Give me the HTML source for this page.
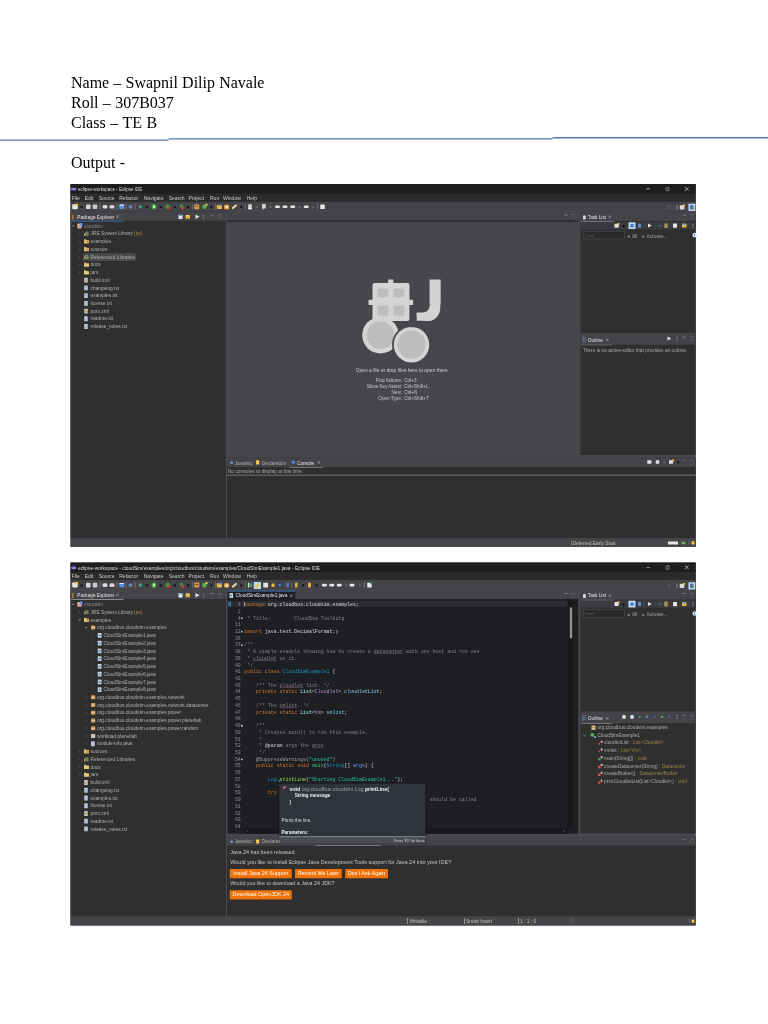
<!DOCTYPE html>
<html><head><meta charset="utf-8"><title>Output</title><style>
html,body{margin:0;padding:0;background:#fff}
body{width:768px;height:1024px;position:relative;overflow:hidden}
#root{position:absolute;left:0;top:0;width:3072px;height:4096px;transform:scale(0.25);transform-origin:0 0}
.b{position:absolute}
.t{position:absolute;white-space:pre;margin:0}
.s{font-family:"Liberation Sans",sans-serif}
.sb{font-family:"Liberation Sans",sans-serif;font-weight:bold}
.h{font-family:"Liberation Serif",serif;font-size:64px;line-height:76px;color:#000}
.m{font-family:"Liberation Mono",monospace;font-size:19.6px;line-height:24px}
#wrap{position:absolute;left:0;top:0;width:768px;height:1024px;overflow:hidden}
.t{opacity:0.999}
</style></head><body><div id="wrap"><div id="root">
<div class="t h" style="left:284px;top:291.6px;word-spacing:0.6px">Name – Swapnil Dilip Navale</div>
<div class="t h" style="left:284px;top:370.8px;word-spacing:1.2px">Roll – 307B037</div>
<div class="t h" style="left:284px;top:451.6px;word-spacing:2.2px">Class – TE B</div>
<div class="t h" style="left:284px;top:614px;word-spacing:1.2px">Output -</div>
<div class="b" style="left:0px;top:557.6px;width:673.6px;height:5.2px;background:#5379b4;"></div>
<div class="b" style="left:673.6px;top:553px;width:1536px;height:5.2px;background:#5379b4;"></div>
<div class="b" style="left:2209.6px;top:548.4px;width:862.4px;height:5.2px;background:#5379b4;"></div>
<div class="b" style="left:281.6px;top:736.4px;width:2501.6px;height:1451.6px;background:#48484c;"></div>
<div class="b" style="left:281.6px;top:804.4px;width:2501.6px;height:42.4px;background:#444448;"></div>
<div class="b" style="left:281.6px;top:845.2px;width:2501.6px;height:2px;background:#4c4c51;"></div>
<div class="b" style="left:281.6px;top:768.4px;width:2501.6px;height:38.4px;background:#2b2b2b;"></div>
<div class="b" style="left:281.6px;top:736.4px;width:2501.6px;height:37.6px;background:#1e1e1e;"></div>
<div class="b" style="left:285.2px;top:749.2px;width:19.6px;height:16px;background:#483c98;border-radius:8px;"></div>
<div class="b" style="left:285.2px;top:754.4px;width:19.6px;height:2px;background:#cfcaea;"></div>
<div class="b" style="left:285.2px;top:758.4px;width:19.6px;height:2px;background:#cfcaea;"></div>
<div class="t s" style="top:748.4px;font-size:18px;line-height:21.6px;color:#dcdcdc;left:312px;">eclipse-workspace - Eclipse IDE</div>
<div class="b" style="left:2586.4px;top:754.4px;width:13.6px;height:2.2px;background:#d8d8d8;"></div>
<div class="b" style="left:2663.2px;top:749.6px;width:9.6px;height:10.4px;background:transparent;border:2.2px solid #d8d8d8;border-radius:2.4px;"></div>
<div class="b" style="left:2666.4px;top:747.2px;width:9.6px;height:5.6px;background:transparent;border-top:2.2px solid #d8d8d8;border-right:2.2px solid #d8d8d8;border-radius:2.4px;"></div>
<div class="b" style="left:2736.4px;top:754.8px;width:22.4px;height:2px;background:#d4d4d4;transform:rotate(45deg)"></div>
<div class="b" style="left:2736.4px;top:754.8px;width:22.4px;height:2px;background:#d4d4d4;transform:rotate(-45deg)"></div>
<div class="t s" style="top:779.2px;font-size:20px;line-height:24px;color:#c8c8c8;left:287px;">File</div>
<div class="t s" style="top:779.2px;font-size:20px;line-height:24px;color:#c8c8c8;left:339px;">Edit</div>
<div class="t s" style="top:779.2px;font-size:20px;line-height:24px;color:#c8c8c8;left:395px;">Source</div>
<div class="t s" style="top:779.2px;font-size:20px;line-height:24px;color:#c8c8c8;left:477px;">Refactor</div>
<div class="t s" style="top:779.2px;font-size:20px;line-height:24px;color:#c8c8c8;left:575px;">Navigate</div>
<div class="t s" style="top:779.2px;font-size:20px;line-height:24px;color:#c8c8c8;left:675px;">Search</div>
<div class="t s" style="top:779.2px;font-size:20px;line-height:24px;color:#c8c8c8;left:754px;">Project</div>
<div class="t s" style="top:779.2px;font-size:20px;line-height:24px;color:#c8c8c8;left:840px;">Run</div>
<div class="t s" style="top:779.2px;font-size:20px;line-height:24px;color:#c8c8c8;left:892px;">Window</div>
<div class="t s" style="top:779.2px;font-size:20px;line-height:24px;color:#c8c8c8;left:987px;">Help</div>
<div class="b" style="left:288.6px;top:816.8px;width:22px;height:20px;background:#e8e8e8;border-radius:3.2px;"></div>
<div class="b" style="left:302px;top:814.8px;width:9.6px;height:8.8px;background:#f2c744;"></div>
<div class="b" style="left:321.6px;top:823.6px;width:9.6px;height:8.4px;background:#111;border-radius:4.4px"></div>
<div class="b" style="left:344px;top:817.6px;width:17.6px;height:18.4px;background:#d6d6d6;border-radius:3.2px;"></div>
<div class="b" style="left:370.8px;top:817.6px;width:18.4px;height:18.4px;background:#cacaca;border-radius:3.2px;"></div>
<div class="b" style="left:398.4px;top:814.8px;width:3.2px;height:24px;background:#707075;"></div>
<div class="b" style="left:410px;top:819.6px;width:20px;height:14.4px;background:#d8d8d8;border-radius:6px;"></div>
<div class="b" style="left:438px;top:819.6px;width:20px;height:14.4px;background:#d8d8d8;border-radius:6px;"></div>
<div class="b" style="left:466.4px;top:814.8px;width:3.2px;height:24px;background:#707075;"></div>
<div class="b" style="left:477px;top:818px;width:20px;height:17.6px;background:#5b8fd9;border-radius:3.2px;"></div>
<div class="b" style="left:478.4px;top:818px;width:17.6px;height:4.8px;background:#dfe8f5;"></div>
<div class="b" style="left:502.4px;top:814.8px;width:3.2px;height:24px;background:#707075;"></div>
<div class="b" style="left:515.2px;top:820px;width:13.6px;height:13.6px;background:#5d86a8;border-radius:3.2px;"></div>
<div class="b" style="left:538.4px;top:814.8px;width:3.2px;height:24px;background:#707075;"></div>
<div class="b" style="left:554.8px;top:819.6px;width:14.4px;height:14.4px;background:#3f9a86;border-radius:7.2px;"></div>
<div class="b" style="left:582.6px;top:823.6px;width:9.6px;height:8.4px;background:#111;border-radius:4.4px"></div>
<div class="b" style="left:605.6px;top:816.4px;width:20.8px;height:20.8px;background:#3fae3f;border-radius:10.4px;"></div>
<div class="b" style="left:612.8px;top:821.6px;width:6.4px;height:10.4px;background:#e9ffe9;"></div>
<div class="b" style="left:638.4px;top:823.6px;width:9.6px;height:8.4px;background:#111;border-radius:4.4px"></div>
<div class="b" style="left:661.2px;top:817.6px;width:18.4px;height:18.4px;background:#3a9a3a;border-radius:9.2px;"></div>
<div class="b" style="left:672px;top:828.4px;width:10.4px;height:8.8px;background:#c33;"></div>
<div class="b" style="left:694.4px;top:823.6px;width:9.6px;height:8.4px;background:#111;border-radius:4.4px"></div>
<div class="b" style="left:718.8px;top:817.2px;width:14.4px;height:14.4px;background:#3a9a3a;border-radius:7.2px;"></div>
<div class="b" style="left:724.8px;top:827.6px;width:12.8px;height:10.4px;background:#d33;border-radius:4px;"></div>
<div class="b" style="left:748.4px;top:823.6px;width:9.6px;height:8.4px;background:#111;border-radius:4.4px"></div>
<div class="b" style="left:768.8px;top:814.8px;width:3.2px;height:24px;background:#707075;"></div>
<div class="b" style="left:777px;top:816.8px;width:20px;height:20px;background:#d89a4a;border-radius:3.2px;"></div>
<div class="b" style="left:780px;top:822.8px;width:13.6px;height:3.2px;background:#7a4a18;"></div>
<div class="b" style="left:808.8px;top:817.6px;width:18.4px;height:18.4px;background:#5ab04a;border-radius:9.2px;"></div>
<div class="b" style="left:821.6px;top:814.8px;width:8px;height:8px;background:#f2c744;"></div>
<div class="b" style="left:839.6px;top:823.6px;width:9.6px;height:8.4px;background:#111;border-radius:4.4px"></div>
<div class="b" style="left:860.8px;top:814.8px;width:3.2px;height:24px;background:#707075;"></div>
<div class="b" style="left:866.8px;top:819.6px;width:21.6px;height:16.8px;background:#e8b84a;border-radius:3.2px;"></div>
<div class="b" style="left:878.4px;top:815.6px;width:9.6px;height:8.8px;background:#4d7fd0;border-radius:4px;"></div>
<div class="b" style="left:897.2px;top:819.2px;width:19.2px;height:17.6px;background:#e8b04a;border-radius:3.2px;"></div>
<div class="b" style="left:901.6px;top:824.4px;width:9.6px;height:8px;background:#fbe9c0;"></div>
<div class="b" style="left:926.4px;top:823.2px;width:23.2px;height:7.6px;background:#f0dca0;transform:rotate(-40deg);border-radius:2.4px"></div>
<div class="b" style="left:959.6px;top:823.6px;width:9.6px;height:8.4px;background:#111;border-radius:4.4px"></div>
<div class="b" style="left:980px;top:814.8px;width:3.2px;height:24px;background:#707075;"></div>
<div class="b" style="left:992.8px;top:816.8px;width:14.4px;height:20px;background:#d8d8d8;border-radius:2px;"></div>
<div class="b" style="left:992.8px;top:833.2px;width:14.4px;height:3.6px;background:#fff;"></div>
<div class="b" style="left:1022.4px;top:823.6px;width:9.6px;height:8.4px;background:#666;border-radius:4.4px"></div>
<div class="b" style="left:1049.2px;top:816.4px;width:13.6px;height:17.6px;background:#cfcfcf;border-radius:2px;"></div>
<div class="b" style="left:1049.6px;top:816.4px;width:3.2px;height:22.4px;background:#eee;"></div>
<div class="b" style="left:1077.2px;top:823.6px;width:9.6px;height:8.4px;background:#666;border-radius:4.4px"></div>
<div class="b" style="left:1100px;top:821.6px;width:20px;height:10.4px;background:#e6e6e6;border-radius:4.8px;"></div>
<div class="b" style="left:1130px;top:821.6px;width:20px;height:10.4px;background:#e6e6e6;border-radius:4.8px;"></div>
<div class="b" style="left:1160.8px;top:821.6px;width:20px;height:10.4px;background:#e6e6e6;border-radius:4.8px;"></div>
<div class="b" style="left:1194px;top:823.6px;width:9.6px;height:8.4px;background:#666;border-radius:4.4px"></div>
<div class="b" style="left:1215px;top:821.6px;width:20px;height:10.4px;background:#e6e6e6;border-radius:4.8px;"></div>
<div class="b" style="left:1247.6px;top:823.6px;width:9.6px;height:8.4px;background:#666;border-radius:4.4px"></div>
<div class="b" style="left:1269.2px;top:814.8px;width:3.2px;height:24px;background:#707075;"></div>
<div class="b" style="left:1280.8px;top:817.6px;width:18.4px;height:18.4px;background:#e9e9e9;border-radius:2px;"></div>
<div class="b" style="left:2669.6px;top:821.6px;width:10.4px;height:10.4px;background:transparent;border:2px solid #777;border-radius:8px;"></div>
<div class="b" style="left:2706.4px;top:819.6px;width:3.2px;height:20px;background:#888;"></div>
<div class="b" style="left:2719.2px;top:821.2px;width:17.6px;height:16.8px;background:#dcdcdc;border-radius:3.2px;"></div>
<div class="b" style="left:2732px;top:818.4px;width:8px;height:8px;background:#e9c440;"></div>
<div class="b" style="left:2753.6px;top:815.2px;width:27.2px;height:28.8px;background:#c6def5;border-radius:2.4px;"></div>
<div class="b" style="left:2760px;top:820px;width:14.4px;height:19.2px;background:#4a6fb8;border-radius:3.2px;"></div>
<div class="b" style="left:2770.4px;top:828px;width:7.2px;height:10.4px;background:#7ab04a;"></div>
<div class="b" style="left:281.6px;top:846px;width:623.2px;height:1306.8px;background:#2f2f2f;"></div>
<div class="b" style="left:281.6px;top:846px;width:623.2px;height:36.8px;background:#444448;"></div>
<div class="b" style="left:281.6px;top:882.8px;width:212.4px;height:3.2px;background:#3f78c4;"></div>
<div class="b" style="left:493.6px;top:850px;width:1.6px;height:32.8px;background:#4c4c50;"></div>
<div class="b" style="left:289.2px;top:858px;width:4.4px;height:20px;background:#c8862e;border-radius:1.6px;"></div>
<div class="t s" style="top:857.12px;font-size:18.8px;line-height:22.56px;color:#e4e4e4;left:309px;">Package Explorer</div>
<div class="b" style="left:462.16px;top:865.6px;width:15.68px;height:1.8px;background:#a0a0a0;transform:rotate(45deg)"></div>
<div class="b" style="left:462.16px;top:865.6px;width:15.68px;height:1.8px;background:#a0a0a0;transform:rotate(-45deg)"></div>
<div class="b" style="left:714.4px;top:858.8px;width:16px;height:17.6px;background:#dfe6ee;border-radius:2px;"></div>
<div class="b" style="left:716.8px;top:859.6px;width:10.4px;height:4.8px;background:#5b8fd9;"></div>
<div class="b" style="left:742px;top:860px;width:17.6px;height:15.2px;background:#e2b13c;border-radius:2.4px;"></div>
<div class="b" style="left:744px;top:860px;width:10.4px;height:4px;background:#f5dc92;"></div>
<div class="b" style="left:782px;top:858.4px;width:0;height:0;border-top:9.2px solid transparent;border-bottom:9.2px solid transparent;border-left:16px solid #e6e6e6;"></div>
<div class="b" style="left:813.2px;top:859.6px;width:3.2px;height:3.2px;background:#d0d0d0;border-radius:1.6px;"></div>
<div class="b" style="left:813.2px;top:866px;width:3.2px;height:3.2px;background:#d0d0d0;border-radius:1.6px;"></div>
<div class="b" style="left:813.2px;top:872.4px;width:3.2px;height:3.2px;background:#d0d0d0;border-radius:1.6px;"></div>
<div class="b" style="left:842.4px;top:859.6px;width:11.2px;height:2.4px;background:#8e8e8e;"></div>
<div class="b" style="left:872px;top:858.8px;width:12px;height:13.6px;background:transparent;border:1.6px solid #767676;border-top-width:2.8px;"></div>
<div class="b" style="left:281.6px;top:846px;width:3.2px;height:1306.8px;background:#505054;"></div>
<div class="b" style="left:905.6px;top:850.8px;width:2.8px;height:1302px;background:#55555a;"></div>
<div class="b" style="left:908.4px;top:846.8px;width:1405.6px;height:37.6px;background:#444448;"></div>
<div class="b" style="left:908.4px;top:881.2px;width:1405.6px;height:7.6px;background:#2c2c30;"></div>
<div class="b" style="left:2322.4px;top:846.8px;width:460.8px;height:485.6px;background:#2f2f2f;"></div>
<div class="b" style="left:2322.4px;top:846.8px;width:460.8px;height:37.6px;background:#444448;"></div>
<div class="b" style="left:2455.2px;top:850.8px;width:1.6px;height:33.6px;background:#4c4c50;"></div>
<div class="b" style="left:2322.4px;top:887.6px;width:460.8px;height:30px;background:#3b3b3f;"></div>
<div class="b" style="left:2323.6px;top:885.2px;width:132px;height:2.4px;background:#8a8a8a;"></div>
<div class="b" style="left:2331.6px;top:862px;width:11.2px;height:16px;background:#d8d8d8;border-radius:1.6px;"></div>
<div class="t s" style="top:857.52px;font-size:18.8px;line-height:22.56px;color:#e0e0e0;left:2351.2px;">Task List</div>
<div class="b" style="left:2430.56px;top:867.2px;width:15.68px;height:1.8px;background:#a0a0a0;transform:rotate(45deg)"></div>
<div class="b" style="left:2430.56px;top:867.2px;width:15.68px;height:1.8px;background:#a0a0a0;transform:rotate(-45deg)"></div>
<div class="b" style="left:2732px;top:858.8px;width:11.2px;height:2.8px;background:#8e8e8e;"></div>
<div class="b" style="left:2761.6px;top:858px;width:12px;height:14.4px;background:transparent;border:1.6px solid #767676;border-top-width:2.8px;"></div>
<div class="b" style="left:2258.4px;top:858.8px;width:11.2px;height:2.8px;background:#8e8e8e;"></div>
<div class="b" style="left:2286.4px;top:858px;width:12px;height:14.4px;background:transparent;border:1.6px solid #767676;border-top-width:2.8px;"></div>
<div class="b" style="left:2458px;top:894.8px;width:16.8px;height:16px;background:#e4e4e4;border-radius:3.2px;"></div>
<div class="b" style="left:2469.6px;top:891.6px;width:8px;height:8px;background:#e9c440;"></div>
<div class="b" style="left:2489.2px;top:899.6px;width:9.6px;height:8.4px;background:#111;border-radius:4.4px"></div>
<div class="b" style="left:2514.4px;top:889.2px;width:28px;height:27.2px;background:#bcd9f2;border-radius:2px;"></div>
<div class="b" style="left:2521.2px;top:896px;width:13.6px;height:13.6px;background:#4d7fd0;border-radius:3.2px;"></div>
<div class="b" style="left:2552.4px;top:894.8px;width:12px;height:16px;background:#5b8fd9;border-radius:2px;"></div>
<div class="b" style="left:2574.4px;top:892.8px;width:3.2px;height:20px;background:#4a4a4e;"></div>
<div class="b" style="left:2592px;top:894.4px;width:0;height:0;border-top:8.4px solid transparent;border-bottom:8.4px solid transparent;border-left:15.2px solid #e0e0e0;"></div>
<div class="b" style="left:2631.2px;top:900.4px;width:14.4px;height:4.8px;background:#44679a;border-radius:1.6px;"></div>
<div class="b" style="left:2658px;top:893.6px;width:12px;height:18.4px;background:#e0b040;border-radius:1.6px;"></div>
<div class="b" style="left:2662.8px;top:893.6px;width:2.8px;height:18.4px;background:#3a67b5;"></div>
<div class="b" style="left:2692px;top:894.4px;width:16px;height:16.8px;background:#e6e6e6;border-radius:2.4px;"></div>
<div class="b" style="left:2728px;top:895.2px;width:17.6px;height:15.2px;background:#e9b540;border-radius:2.4px;"></div>
<div class="b" style="left:2732px;top:894.8px;width:9.6px;height:6.4px;background:#6f9ad8;"></div>
<div class="b" style="left:2770.4px;top:894.8px;width:3.2px;height:3.2px;background:#d0d0d0;border-radius:1.6px;"></div>
<div class="b" style="left:2770.4px;top:901.2px;width:3.2px;height:3.2px;background:#d0d0d0;border-radius:1.6px;"></div>
<div class="b" style="left:2770.4px;top:907.6px;width:3.2px;height:3.2px;background:#d0d0d0;border-radius:1.6px;"></div>
<div class="b" style="left:2333.2px;top:924px;width:164.4px;height:33.2px;background:#2a2a2a;border:2px solid #55585c;box-sizing:border-box;"></div>
<div class="t s" style="top:931.84px;font-size:17.6px;line-height:21.12px;color:#5a5d62;left:2340.8px;">Find</div>
<div class="b" style="left:2510px;top:942.4px;width:9.6px;height:8.4px;background:#888;border-radius:4.4px"></div>
<div class="t s" style="top:933.28px;font-size:19.2px;line-height:23.04px;color:#a0a0a0;left:2528px;">All</div>
<div class="b" style="left:2567.6px;top:942.4px;width:9.6px;height:8.4px;background:#888;border-radius:4.4px"></div>
<div class="t s" style="top:933.28px;font-size:19.2px;line-height:23.04px;color:#a0a0a0;left:2586px;">Activate...</div>
<div class="b" style="left:2770px;top:931.2px;width:18.4px;height:18.4px;background:#dbe7f7;border-radius:9.2px;"></div>
<div class="b" style="left:2776.8px;top:934.8px;width:3.6px;height:10.4px;background:#3f6fc0;"></div>
<div class="b" style="left:2322.4px;top:1332.4px;width:460.8px;height:488px;background:#2f2f2f;"></div>
<div class="b" style="left:2322.4px;top:1332.4px;width:460.8px;height:46.4px;background:#444448;"></div>
<div class="b" style="left:2448.8px;top:1336.4px;width:1.6px;height:42.4px;background:#4c4c50;"></div>
<div class="b" style="left:2323.6px;top:1378.8px;width:125.6px;height:2.4px;background:#8a8a8a;"></div>
<div class="b" style="left:2330.4px;top:1346.8px;width:4.8px;height:4.8px;background:#4d8fe0;"></div>
<div class="b" style="left:2330.4px;top:1354.8px;width:4.8px;height:4.8px;background:#4d8fe0;"></div>
<div class="b" style="left:2330.4px;top:1362.8px;width:4.8px;height:4.8px;background:#4d8fe0;"></div>
<div class="b" style="left:2336.8px;top:1348.4px;width:6.4px;height:2px;background:#bbb;"></div>
<div class="b" style="left:2336.8px;top:1356.4px;width:6.4px;height:2px;background:#bbb;"></div>
<div class="b" style="left:2336.8px;top:1364.4px;width:6.4px;height:2px;background:#bbb;"></div>
<div class="t s" style="top:1349.28px;font-size:19.2px;line-height:23.04px;color:#e0e0e0;left:2351.2px;">Outline</div>
<div class="b" style="left:2420.56px;top:1359.2px;width:15.68px;height:1.8px;background:#a0a0a0;transform:rotate(45deg)"></div>
<div class="b" style="left:2420.56px;top:1359.2px;width:15.68px;height:1.8px;background:#a0a0a0;transform:rotate(-45deg)"></div>
<div class="b" style="left:2732px;top:1346.8px;width:11.2px;height:2.8px;background:#8e8e8e;"></div>
<div class="b" style="left:2761.6px;top:1346px;width:12px;height:14.4px;background:transparent;border:1.6px solid #767676;border-top-width:2.8px;"></div>
<div class="b" style="left:2706.4px;top:1346px;width:3.2px;height:3.2px;background:#d0d0d0;border-radius:1.6px;"></div>
<div class="b" style="left:2706.4px;top:1352.4px;width:3.2px;height:3.2px;background:#d0d0d0;border-radius:1.6px;"></div>
<div class="b" style="left:2706.4px;top:1358.8px;width:3.2px;height:3.2px;background:#d0d0d0;border-radius:1.6px;"></div>
<div class="b" style="left:2670.4px;top:1345.6px;width:0;height:0;border-top:8.4px solid transparent;border-bottom:8.4px solid transparent;border-left:15.2px solid #e0e0e0;"></div>
<div class="b" style="left:908px;top:1830px;width:1875.2px;height:322.8px;background:#2f2f2f;"></div>
<div class="b" style="left:908px;top:1830px;width:1875.2px;height:38.4px;background:#444448;"></div>
<div class="b" style="left:281.6px;top:2152.8px;width:2501.6px;height:35.2px;background:#46464a;"></div>
<div class="b" style="left:2766.4px;top:2164.4px;width:11.2px;height:14.4px;background:#f2c440;border-radius:5.6px;"></div>
<div class="b" style="left:2755.2px;top:2165.2px;width:2.4px;height:3.2px;background:#9a9a9a;"></div>
<div class="b" style="left:2755.2px;top:2172.4px;width:2.4px;height:3.2px;background:#9a9a9a;"></div>
<div class="b" style="left:908.4px;top:888.8px;width:1405.6px;height:939.2px;background:#47474b;"></div>
<div class="b" style="left:287.2px;top:901.6px;width:0;height:0;border-left:5.2px solid transparent;border-right:5.2px solid transparent;border-top:6.4px solid #9a9a9a;"></div>
<div class="b" style="left:308.8px;top:896px;width:18.4px;height:17.6px;background:#d8a0a6;border-radius:3.2px;"></div>
<div class="b" style="left:317.6px;top:892.4px;width:12px;height:11.2px;background:#6a98dc;border-radius:2.8px;"></div>
<div class="b" style="left:310.4px;top:894.4px;width:7.2px;height:5.6px;background:#e8c07a;border-radius:2px;"></div>
<div class="t s" style="left:336.4px;top:892.4px;font-size:19.2px;line-height:23.2px;color:#8c8c8c">cloudsim</div>
<div class="b" style="left:317.2px;top:931.32px;width:0;height:0;border-top:4.4px solid transparent;border-bottom:4.4px solid transparent;border-left:5.6px solid #5c5c5c;"></div>
<div class="b" style="left:336px;top:932.52px;width:4.4px;height:11.2px;background:#cf9a38;"></div>
<div class="b" style="left:340.8px;top:927.72px;width:4.4px;height:16px;background:#4f9ac4;"></div>
<div class="b" style="left:345.6px;top:926.12px;width:4.4px;height:17.6px;background:#cf9a38;"></div>
<div class="b" style="left:350.4px;top:930.12px;width:4px;height:13.6px;background:#74a64c;"></div>
<div class="t s" style="left:362.4px;top:923.32px;font-size:19.2px;line-height:23.2px;color:#b0b0b0">JRE System Library <span style="color:#a08a50">[jre]</span></div>
<div class="b" style="left:317.2px;top:962.24px;width:0;height:0;border-top:4.4px solid transparent;border-bottom:4.4px solid transparent;border-left:5.6px solid #5c5c5c;"></div>
<div class="b" style="left:336px;top:959.84px;width:19.6px;height:14.4px;background:#e6c070;border-radius:2.4px;"></div>
<div class="b" style="left:336px;top:957.04px;width:8.8px;height:4.8px;background:#e6c070;border-radius:2px;"></div>
<div class="b" style="left:346.4px;top:963.44px;width:7.2px;height:7.2px;background:#b98a4a;border-radius:1.6px;"></div>
<div class="t s" style="left:362.4px;top:954.24px;font-size:19.2px;line-height:23.2px;color:#b0b0b0">examples</div>
<div class="b" style="left:317.2px;top:993.16px;width:0;height:0;border-top:4.4px solid transparent;border-bottom:4.4px solid transparent;border-left:5.6px solid #5c5c5c;"></div>
<div class="b" style="left:336px;top:990.76px;width:19.6px;height:14.4px;background:#e6c070;border-radius:2.4px;"></div>
<div class="b" style="left:336px;top:987.96px;width:8.8px;height:4.8px;background:#e6c070;border-radius:2px;"></div>
<div class="b" style="left:346.4px;top:994.36px;width:7.2px;height:7.2px;background:#b98a4a;border-radius:1.6px;"></div>
<div class="t s" style="left:362.4px;top:985.16px;font-size:19.2px;line-height:23.2px;color:#b0b0b0">sources</div>
<div class="b" style="left:332px;top:1012.88px;width:211.2px;height:31.2px;background:#4a4a4e;"></div>
<div class="b" style="left:317.2px;top:1024.08px;width:0;height:0;border-top:4.4px solid transparent;border-bottom:4.4px solid transparent;border-left:5.6px solid #5c5c5c;"></div>
<div class="b" style="left:336px;top:1025.28px;width:4.4px;height:11.2px;background:#cf9a38;"></div>
<div class="b" style="left:340.8px;top:1020.48px;width:4.4px;height:16px;background:#4f9ac4;"></div>
<div class="b" style="left:345.6px;top:1018.88px;width:4.4px;height:17.6px;background:#cf9a38;"></div>
<div class="b" style="left:350.4px;top:1022.88px;width:4px;height:13.6px;background:#74a64c;"></div>
<div class="t s" style="left:362.4px;top:1016.08px;font-size:19.2px;line-height:23.2px;color:#b0b0b0">Referenced Libraries</div>
<div class="b" style="left:317.2px;top:1055px;width:0;height:0;border-top:4.4px solid transparent;border-bottom:4.4px solid transparent;border-left:5.6px solid #5c5c5c;"></div>
<div class="b" style="left:336px;top:1052.6px;width:19.6px;height:14.4px;background:#e8c878;border-radius:2.4px;"></div>
<div class="b" style="left:336px;top:1049.8px;width:8.8px;height:4.8px;background:#e8c878;border-radius:2px;"></div>
<div class="t s" style="left:362.4px;top:1047px;font-size:19.2px;line-height:23.2px;color:#b0b0b0">docs</div>
<div class="b" style="left:317.2px;top:1085.92px;width:0;height:0;border-top:4.4px solid transparent;border-bottom:4.4px solid transparent;border-left:5.6px solid #5c5c5c;"></div>
<div class="b" style="left:336px;top:1083.52px;width:19.6px;height:14.4px;background:#e8c878;border-radius:2.4px;"></div>
<div class="b" style="left:336px;top:1080.72px;width:8.8px;height:4.8px;background:#e8c878;border-radius:2px;"></div>
<div class="t s" style="left:362.4px;top:1077.92px;font-size:19.2px;line-height:23.2px;color:#b0b0b0">jars</div>
<div class="b" style="left:336.8px;top:1110.84px;width:14.4px;height:19.6px;background:#cbcbcb;border-radius:2.4px;"></div>
<div class="b" style="left:340px;top:1118.04px;width:8px;height:6.4px;background:#b0a070;"></div>
<div class="t s" style="left:362.4px;top:1108.84px;font-size:19.2px;line-height:23.2px;color:#b0b0b0">build.xml</div>
<div class="b" style="left:336.8px;top:1141.76px;width:14.4px;height:19.6px;background:#c8cfd9;border-radius:2.4px;"></div>
<div class="b" style="left:339.6px;top:1146.96px;width:8.8px;height:1.8px;background:#8aa6cf;"></div>
<div class="b" style="left:339.6px;top:1151.36px;width:8.8px;height:1.8px;background:#8aa6cf;"></div>
<div class="b" style="left:339.6px;top:1155.76px;width:8.8px;height:1.8px;background:#8aa6cf;"></div>
<div class="t s" style="left:362.4px;top:1139.76px;font-size:19.2px;line-height:23.2px;color:#b0b0b0">changelog.txt</div>
<div class="b" style="left:336.8px;top:1172.68px;width:14.4px;height:19.6px;background:#c8cfd9;border-radius:2.4px;"></div>
<div class="b" style="left:339.6px;top:1177.88px;width:8.8px;height:1.8px;background:#8aa6cf;"></div>
<div class="b" style="left:339.6px;top:1182.28px;width:8.8px;height:1.8px;background:#8aa6cf;"></div>
<div class="b" style="left:339.6px;top:1186.68px;width:8.8px;height:1.8px;background:#8aa6cf;"></div>
<div class="t s" style="left:362.4px;top:1170.68px;font-size:19.2px;line-height:23.2px;color:#b0b0b0">examples.txt</div>
<div class="b" style="left:336.8px;top:1203.6px;width:14.4px;height:19.6px;background:#c8cfd9;border-radius:2.4px;"></div>
<div class="b" style="left:339.6px;top:1208.8px;width:8.8px;height:1.8px;background:#8aa6cf;"></div>
<div class="b" style="left:339.6px;top:1213.2px;width:8.8px;height:1.8px;background:#8aa6cf;"></div>
<div class="b" style="left:339.6px;top:1217.6px;width:8.8px;height:1.8px;background:#8aa6cf;"></div>
<div class="t s" style="left:362.4px;top:1201.6px;font-size:19.2px;line-height:23.2px;color:#b0b0b0">license.txt</div>
<div class="b" style="left:336.8px;top:1234.52px;width:14.4px;height:19.6px;background:#c6cdd8;border-radius:2.4px;"></div>
<div class="b" style="left:340px;top:1240.92px;width:8px;height:8px;background:#cf9a38;"></div>
<div class="t s" style="left:362.4px;top:1232.52px;font-size:19.2px;line-height:23.2px;color:#b0b0b0">pom.xml</div>
<div class="b" style="left:336.8px;top:1265.44px;width:14.4px;height:19.6px;background:#c8cfd9;border-radius:2.4px;"></div>
<div class="b" style="left:339.6px;top:1270.64px;width:8.8px;height:1.8px;background:#8aa6cf;"></div>
<div class="b" style="left:339.6px;top:1275.04px;width:8.8px;height:1.8px;background:#8aa6cf;"></div>
<div class="b" style="left:339.6px;top:1279.44px;width:8.8px;height:1.8px;background:#8aa6cf;"></div>
<div class="t s" style="left:362.4px;top:1263.44px;font-size:19.2px;line-height:23.2px;color:#b0b0b0">readme.txt</div>
<div class="b" style="left:336.8px;top:1296.36px;width:14.4px;height:19.6px;background:#c8cfd9;border-radius:2.4px;"></div>
<div class="b" style="left:339.6px;top:1301.56px;width:8.8px;height:1.8px;background:#8aa6cf;"></div>
<div class="b" style="left:339.6px;top:1305.96px;width:8.8px;height:1.8px;background:#8aa6cf;"></div>
<div class="b" style="left:339.6px;top:1310.36px;width:8.8px;height:1.8px;background:#8aa6cf;"></div>
<div class="t s" style="left:362.4px;top:1294.36px;font-size:19.2px;line-height:23.2px;color:#b0b0b0">release_notes.txt</div>
<div class="b" style="left:1489.6px;top:1132.4px;width:148.8px;height:151.6px;background:#d4d4d4;border-radius:8px;"></div>
<div class="b" style="left:1553.2px;top:1118px;width:19.6px;height:16px;background:#d4d4d4;"></div>
<div class="b" style="left:1474.4px;top:1198.8px;width:178.8px;height:21.2px;background:#d4d4d4;border-radius:3.2px;"></div>
<div class="b" style="left:1509.6px;top:1155.2px;width:43.6px;height:34px;background:#bdbdbd;"></div>
<div class="b" style="left:1573.6px;top:1155.2px;width:43.6px;height:34px;background:#bdbdbd;"></div>
<div class="b" style="left:1509.6px;top:1222.4px;width:43.6px;height:40px;background:#bdbdbd;"></div>
<div class="b" style="left:1573.6px;top:1222.4px;width:43.6px;height:40px;background:#bdbdbd;"></div>
<div class="b" style="left:1449.2px;top:1268.4px;width:145.6px;height:145.6px;background:#d4d4d4;border-radius:50%;"></div>
<div class="b" style="left:1467.2px;top:1286.4px;width:109.6px;height:109.6px;background:#bdbdbd;border-radius:50%;"></div>
<div class="b" style="left:1568.4px;top:1301.2px;width:155.2px;height:155.2px;background:#47474b;border-radius:50%;"></div>
<div class="b" style="left:1574.8px;top:1307.6px;width:142.4px;height:142.4px;background:#d4d4d4;border-radius:50%;"></div>
<div class="b" style="left:1589.6px;top:1322.4px;width:112.8px;height:112.8px;background:#bdbdbd;border-radius:50%;"></div>
<div class="t s" style="left:1666px;top:1091.6px;font-size:186px;line-height:224px;color:#d4d4d4;-webkit-text-stroke:32px #d4d4d4;filter:opacity(1)">J</div>
<div class="b" style="left:1639.2px;top:1220.8px;width:28px;height:88px;background:#47474b;"></div>
<div class="b" style="left:1667.2px;top:1216px;width:54px;height:67.2px;background:#d4d4d4;"></div>
<div class="b" style="left:1653.6px;top:1096px;width:65.2px;height:153.6px;background:#47474b;border-bottom-right-radius:28px;"></div>
<div class="b" style="left:1718.8px;top:1117.6px;width:43.2px;height:96px;background:#d4d4d4;"></div>
<div class="t s" style="top:1470.24px;font-size:19.6px;line-height:23.52px;color:#d0d0d0;left:1009.2px;width:1200px;text-align:center;">Open a file or drop files here to open them.</div>
<div class="t s" style="top:1508.96px;font-size:18.4px;line-height:22.08px;color:#c8c8c8;right:1464px;">Find Actions:</div>
<div class="t s" style="top:1508.96px;font-size:18.4px;line-height:22.08px;color:#c8c8c8;left:1616.8px;">Ctrl+3</div>
<div class="t s" style="top:1533.48px;font-size:18.4px;line-height:22.08px;color:#c8c8c8;right:1464px;">Show Key Assist:</div>
<div class="t s" style="top:1533.48px;font-size:18.4px;line-height:22.08px;color:#c8c8c8;left:1616.8px;">Ctrl+Shift+L</div>
<div class="t s" style="top:1558px;font-size:18.4px;line-height:22.08px;color:#c8c8c8;right:1464px;">New:</div>
<div class="t s" style="top:1558px;font-size:18.4px;line-height:22.08px;color:#c8c8c8;left:1616.8px;">Ctrl+N</div>
<div class="t s" style="top:1582.52px;font-size:18.4px;line-height:22.08px;color:#c8c8c8;right:1464px;">Open Type:</div>
<div class="t s" style="top:1582.52px;font-size:18.4px;line-height:22.08px;color:#c8c8c8;left:1616.8px;">Ctrl+Shift+T</div>
<div class="t s" style="top:1388.76px;font-size:19.4px;line-height:23.28px;color:#a8a8a8;left:2330.8px;">There is no active editor that provides an outline.</div>
<div class="b" style="left:921.2px;top:1845.2px;width:10.4px;height:10.4px;background:#6a9be0;border-radius:5.2px;"></div>
<div class="t s" style="top:1841.92px;font-size:18.8px;line-height:22.56px;color:#b0b0b0;left:940px;">Javadoc</div>
<div class="b" style="left:1023.6px;top:1841.2px;width:13.6px;height:16.8px;background:#e9c860;border-radius:2px;"></div>
<div class="t s" style="top:1841.56px;font-size:19.4px;line-height:23.28px;color:#b0b0b0;left:1047.2px;">Declaration</div>
<div class="b" style="left:1158px;top:1832px;width:1.6px;height:36.8px;background:#4c4c50;"></div>
<div class="b" style="left:1291.2px;top:1832px;width:1.6px;height:36.8px;background:#4c4c50;"></div>
<div class="b" style="left:1158px;top:1868.4px;width:134px;height:2.8px;background:#8a8a8a;"></div>
<div class="b" style="left:1166.8px;top:1843.2px;width:13.6px;height:12px;background:#4d7fd0;border-radius:1.6px;"></div>
<div class="t s" style="top:1841.92px;font-size:18.8px;line-height:22.56px;color:#e4e4e4;left:1188px;">Console</div>
<div class="b" style="left:1266.96px;top:1848.8px;width:15.68px;height:1.8px;background:#a0a0a0;transform:rotate(45deg)"></div>
<div class="b" style="left:1266.96px;top:1848.8px;width:15.68px;height:1.8px;background:#a0a0a0;transform:rotate(-45deg)"></div>
<div class="t s" style="top:1873.44px;font-size:19.6px;line-height:23.52px;color:#a8a8a8;left:911.2px;">No consoles to display at this time.</div>
<div class="b" style="left:908px;top:1898.8px;width:1875.2px;height:2.8px;background:#8c8c8c;"></div>
<div class="b" style="left:2589.2px;top:1840.8px;width:16.8px;height:14.4px;background:#e0e0e0;border-radius:1.6px;"></div>
<div class="b" style="left:2622.8px;top:1840.8px;width:14.4px;height:14.4px;background:#e0e0e0;border-radius:1.6px;"></div>
<div class="b" style="left:2651.6px;top:1844.8px;width:9.6px;height:8.4px;background:#666;border-radius:4.4px"></div>
<div class="b" style="left:2675.6px;top:1840.8px;width:16.8px;height:14.4px;background:#e0e0e0;border-radius:1.6px;"></div>
<div class="b" style="left:2688px;top:1837.6px;width:8px;height:8px;background:#e9c440;"></div>
<div class="b" style="left:2707.6px;top:1844.8px;width:9.6px;height:8.4px;background:#111;border-radius:4.4px"></div>
<div class="b" style="left:2732px;top:1841.6px;width:11.2px;height:2.8px;background:#8e8e8e;"></div>
<div class="b" style="left:2761.6px;top:1840.8px;width:12px;height:14.4px;background:transparent;border:1.6px solid #767676;border-top-width:2.8px;"></div>
<div class="b" style="left:2284px;top:2161.6px;width:2.4px;height:22.4px;background:#aaa;"></div>
<div class="t s" style="top:2160.64px;font-size:19.6px;line-height:23.52px;color:#c0c0c0;left:2289.6px;">Deferred Early Start</div>
<div class="b" style="left:2672px;top:2166.4px;width:40px;height:11.2px;background:#e8e8e8;border-radius:2px;"></div>
<div class="b" style="left:2725.6px;top:2166.8px;width:16px;height:10.4px;background:#6fb06f;border-radius:4.8px;"></div>
<div class="b" style="left:281.6px;top:2250px;width:2501.6px;height:1451.6px;background:#48484c;"></div>
<div class="b" style="left:281.6px;top:2318px;width:2501.6px;height:42.4px;background:#444448;"></div>
<div class="b" style="left:281.6px;top:2358.8px;width:2501.6px;height:2px;background:#4c4c51;"></div>
<div class="b" style="left:281.6px;top:2282px;width:2501.6px;height:38.4px;background:#2b2b2b;"></div>
<div class="b" style="left:281.6px;top:2250px;width:2501.6px;height:37.6px;background:#1e1e1e;"></div>
<div class="b" style="left:285.2px;top:2262.8px;width:19.6px;height:16px;background:#483c98;border-radius:8px;"></div>
<div class="b" style="left:285.2px;top:2268px;width:19.6px;height:2px;background:#cfcaea;"></div>
<div class="b" style="left:285.2px;top:2272px;width:19.6px;height:2px;background:#cfcaea;"></div>
<div class="t s" style="top:2261.12px;font-size:19.44px;line-height:23.32px;color:#dcdcdc;left:312px;">eclipse-workspace - cloudSim/examples/org/cloudbus/cloudsim/examples/CloudSimExample1.java - Eclipse IDE</div>
<div class="b" style="left:2586.4px;top:2268px;width:13.6px;height:2.2px;background:#d8d8d8;"></div>
<div class="b" style="left:2663.2px;top:2263.2px;width:9.6px;height:10.4px;background:transparent;border:2.2px solid #d8d8d8;border-radius:2.4px;"></div>
<div class="b" style="left:2666.4px;top:2260.8px;width:9.6px;height:5.6px;background:transparent;border-top:2.2px solid #d8d8d8;border-right:2.2px solid #d8d8d8;border-radius:2.4px;"></div>
<div class="b" style="left:2736.4px;top:2268.4px;width:22.4px;height:2px;background:#d4d4d4;transform:rotate(45deg)"></div>
<div class="b" style="left:2736.4px;top:2268.4px;width:22.4px;height:2px;background:#d4d4d4;transform:rotate(-45deg)"></div>
<div class="t s" style="top:2292.8px;font-size:20px;line-height:24px;color:#c8c8c8;left:287px;">File</div>
<div class="t s" style="top:2292.8px;font-size:20px;line-height:24px;color:#c8c8c8;left:339px;">Edit</div>
<div class="t s" style="top:2292.8px;font-size:20px;line-height:24px;color:#c8c8c8;left:395px;">Source</div>
<div class="t s" style="top:2292.8px;font-size:20px;line-height:24px;color:#c8c8c8;left:477px;">Refactor</div>
<div class="t s" style="top:2292.8px;font-size:20px;line-height:24px;color:#c8c8c8;left:575px;">Navigate</div>
<div class="t s" style="top:2292.8px;font-size:20px;line-height:24px;color:#c8c8c8;left:675px;">Search</div>
<div class="t s" style="top:2292.8px;font-size:20px;line-height:24px;color:#c8c8c8;left:754px;">Project</div>
<div class="t s" style="top:2292.8px;font-size:20px;line-height:24px;color:#c8c8c8;left:840px;">Run</div>
<div class="t s" style="top:2292.8px;font-size:20px;line-height:24px;color:#c8c8c8;left:892px;">Window</div>
<div class="t s" style="top:2292.8px;font-size:20px;line-height:24px;color:#c8c8c8;left:987px;">Help</div>
<div class="b" style="left:288.6px;top:2330.4px;width:22px;height:20px;background:#e8e8e8;border-radius:3.2px;"></div>
<div class="b" style="left:302px;top:2328.4px;width:9.6px;height:8.8px;background:#f2c744;"></div>
<div class="b" style="left:321.6px;top:2337.2px;width:9.6px;height:8.4px;background:#111;border-radius:4.4px"></div>
<div class="b" style="left:344px;top:2331.2px;width:17.6px;height:18.4px;background:#d6d6d6;border-radius:3.2px;"></div>
<div class="b" style="left:370.8px;top:2331.2px;width:18.4px;height:18.4px;background:#cacaca;border-radius:3.2px;"></div>
<div class="b" style="left:398.4px;top:2328.4px;width:3.2px;height:24px;background:#707075;"></div>
<div class="b" style="left:410px;top:2333.2px;width:20px;height:14.4px;background:#d8d8d8;border-radius:6px;"></div>
<div class="b" style="left:438px;top:2333.2px;width:20px;height:14.4px;background:#d8d8d8;border-radius:6px;"></div>
<div class="b" style="left:466.4px;top:2328.4px;width:3.2px;height:24px;background:#707075;"></div>
<div class="b" style="left:477px;top:2331.6px;width:20px;height:17.6px;background:#5b8fd9;border-radius:3.2px;"></div>
<div class="b" style="left:478.4px;top:2331.6px;width:17.6px;height:4.8px;background:#dfe8f5;"></div>
<div class="b" style="left:502.4px;top:2328.4px;width:3.2px;height:24px;background:#707075;"></div>
<div class="b" style="left:515.2px;top:2333.6px;width:13.6px;height:13.6px;background:#5d86a8;border-radius:3.2px;"></div>
<div class="b" style="left:538.4px;top:2328.4px;width:3.2px;height:24px;background:#707075;"></div>
<div class="b" style="left:554.8px;top:2333.2px;width:14.4px;height:14.4px;background:#3f9a86;border-radius:7.2px;"></div>
<div class="b" style="left:582.6px;top:2337.2px;width:9.6px;height:8.4px;background:#111;border-radius:4.4px"></div>
<div class="b" style="left:605.6px;top:2330px;width:20.8px;height:20.8px;background:#3fae3f;border-radius:10.4px;"></div>
<div class="b" style="left:612.8px;top:2335.2px;width:6.4px;height:10.4px;background:#e9ffe9;"></div>
<div class="b" style="left:638.4px;top:2337.2px;width:9.6px;height:8.4px;background:#111;border-radius:4.4px"></div>
<div class="b" style="left:661.2px;top:2331.2px;width:18.4px;height:18.4px;background:#3a9a3a;border-radius:9.2px;"></div>
<div class="b" style="left:672px;top:2342px;width:10.4px;height:8.8px;background:#c33;"></div>
<div class="b" style="left:694.4px;top:2337.2px;width:9.6px;height:8.4px;background:#111;border-radius:4.4px"></div>
<div class="b" style="left:718.8px;top:2330.8px;width:14.4px;height:14.4px;background:#3a9a3a;border-radius:7.2px;"></div>
<div class="b" style="left:724.8px;top:2341.2px;width:12.8px;height:10.4px;background:#d33;border-radius:4px;"></div>
<div class="b" style="left:748.4px;top:2337.2px;width:9.6px;height:8.4px;background:#111;border-radius:4.4px"></div>
<div class="b" style="left:768.8px;top:2328.4px;width:3.2px;height:24px;background:#707075;"></div>
<div class="b" style="left:777px;top:2330.4px;width:20px;height:20px;background:#d89a4a;border-radius:3.2px;"></div>
<div class="b" style="left:780px;top:2336.4px;width:13.6px;height:3.2px;background:#7a4a18;"></div>
<div class="b" style="left:808.8px;top:2331.2px;width:18.4px;height:18.4px;background:#5ab04a;border-radius:9.2px;"></div>
<div class="b" style="left:821.6px;top:2328.4px;width:8px;height:8px;background:#f2c744;"></div>
<div class="b" style="left:839.6px;top:2337.2px;width:9.6px;height:8.4px;background:#111;border-radius:4.4px"></div>
<div class="b" style="left:860.8px;top:2328.4px;width:3.2px;height:24px;background:#707075;"></div>
<div class="b" style="left:866.8px;top:2333.2px;width:21.6px;height:16.8px;background:#e8b84a;border-radius:3.2px;"></div>
<div class="b" style="left:878.4px;top:2329.2px;width:9.6px;height:8.8px;background:#4d7fd0;border-radius:4px;"></div>
<div class="b" style="left:897.2px;top:2332.8px;width:19.2px;height:17.6px;background:#e8b04a;border-radius:3.2px;"></div>
<div class="b" style="left:901.6px;top:2338px;width:9.6px;height:8px;background:#fbe9c0;"></div>
<div class="b" style="left:926.4px;top:2336.8px;width:23.2px;height:7.6px;background:#f0dca0;transform:rotate(-40deg);border-radius:2.4px"></div>
<div class="b" style="left:959.6px;top:2337.2px;width:9.6px;height:8.4px;background:#111;border-radius:4.4px"></div>
<div class="b" style="left:980px;top:2328.4px;width:3.2px;height:24px;background:#707075;"></div>
<div class="b" style="left:991.2px;top:2333.2px;width:17.6px;height:14.4px;background:#4f9a6a;border-radius:3.2px;"></div>
<div class="b" style="left:991.6px;top:2330px;width:3.2px;height:20.8px;background:#eee;"></div>
<div class="b" style="left:1015px;top:2328.4px;width:29px;height:27.6px;background:#bcd9f2;border-radius:2.4px;"></div>
<div class="b" style="left:1019.2px;top:2338px;width:20.8px;height:7.6px;background:#e9c440;transform:rotate(-50deg);border-radius:2.4px"></div>
<div class="b" style="left:1053.2px;top:2331.2px;width:18.4px;height:18.4px;background:#e4e4e4;border-radius:2.4px;"></div>
<div class="b" style="left:1080px;top:2330.4px;width:20px;height:20px;background:#30343a;border-radius:2px;"></div>
<div class="b" style="left:1085.6px;top:2334px;width:12px;height:13.6px;background:#e7b93e;"></div>
<div class="b" style="left:1109.2px;top:2330.4px;width:20px;height:20px;background:#30343a;border-radius:2px;"></div>
<div class="b" style="left:1113.6px;top:2334.8px;width:11.2px;height:11.2px;background:#4d7fd0;"></div>
<div class="b" style="left:1143.6px;top:2332px;width:12.8px;height:16.8px;background:#4a74b8;border-radius:2.4px;"></div>
<div class="b" style="left:1165.2px;top:2328.4px;width:3.2px;height:24px;background:#707075;"></div>
<div class="b" style="left:1179.8px;top:2330.4px;width:10.4px;height:20px;background:#e1b640;border-radius:3.2px;"></div>
<div class="b" style="left:1207.6px;top:2337.2px;width:9.6px;height:8.4px;background:#111;border-radius:4.4px"></div>
<div class="b" style="left:1231.6px;top:2331.2px;width:12px;height:18.4px;background:#e1b640;border-radius:3.2px;"></div>
<div class="b" style="left:1262.4px;top:2337.2px;width:9.6px;height:8.4px;background:#111;border-radius:4.4px"></div>
<div class="b" style="left:1287.6px;top:2335.2px;width:20px;height:10.4px;background:#e6e6e6;border-radius:4.8px;"></div>
<div class="b" style="left:1316.8px;top:2335.2px;width:20px;height:10.4px;background:#e6e6e6;border-radius:4.8px;"></div>
<div class="b" style="left:1346.8px;top:2335.2px;width:20px;height:10.4px;background:#e6e6e6;border-radius:4.8px;"></div>
<div class="b" style="left:1378.8px;top:2337.2px;width:9.6px;height:8.4px;background:#666;border-radius:4.4px"></div>
<div class="b" style="left:1398px;top:2335.2px;width:20px;height:10.4px;background:#e6e6e6;border-radius:4.8px;"></div>
<div class="b" style="left:1435.6px;top:2337.2px;width:9.6px;height:8.4px;background:#666;border-radius:4.4px"></div>
<div class="b" style="left:1456.4px;top:2328.4px;width:3.2px;height:24px;background:#707075;"></div>
<div class="b" style="left:1468.8px;top:2331.2px;width:18.4px;height:18.4px;background:#e9e9e9;border-radius:2px;"></div>
<div class="b" style="left:1480.8px;top:2330px;width:7.2px;height:7.2px;background:#4a9a4a;"></div>
<div class="b" style="left:2669.6px;top:2335.2px;width:10.4px;height:10.4px;background:transparent;border:2px solid #777;border-radius:8px;"></div>
<div class="b" style="left:2706.4px;top:2333.2px;width:3.2px;height:20px;background:#888;"></div>
<div class="b" style="left:2719.2px;top:2334.8px;width:17.6px;height:16.8px;background:#dcdcdc;border-radius:3.2px;"></div>
<div class="b" style="left:2732px;top:2332px;width:8px;height:8px;background:#e9c440;"></div>
<div class="b" style="left:2753.6px;top:2328.8px;width:27.2px;height:28.8px;background:#c6def5;border-radius:2.4px;"></div>
<div class="b" style="left:2760px;top:2333.6px;width:14.4px;height:19.2px;background:#4a6fb8;border-radius:3.2px;"></div>
<div class="b" style="left:2770.4px;top:2341.6px;width:7.2px;height:10.4px;background:#7ab04a;"></div>
<div class="b" style="left:281.6px;top:2359.6px;width:623.2px;height:1306.8px;background:#2f2f2f;"></div>
<div class="b" style="left:281.6px;top:2359.6px;width:623.2px;height:36.8px;background:#444448;"></div>
<div class="b" style="left:281.6px;top:2396.4px;width:212.4px;height:3.2px;background:#8a8a8a;"></div>
<div class="b" style="left:493.6px;top:2363.6px;width:1.6px;height:32.8px;background:#4c4c50;"></div>
<div class="b" style="left:289.2px;top:2371.6px;width:4.4px;height:20px;background:#c8862e;border-radius:1.6px;"></div>
<div class="t s" style="top:2370.72px;font-size:18.8px;line-height:22.56px;color:#e4e4e4;left:309px;">Package Explorer</div>
<div class="b" style="left:462.16px;top:2379.2px;width:15.68px;height:1.8px;background:#a0a0a0;transform:rotate(45deg)"></div>
<div class="b" style="left:462.16px;top:2379.2px;width:15.68px;height:1.8px;background:#a0a0a0;transform:rotate(-45deg)"></div>
<div class="b" style="left:714.4px;top:2372.4px;width:16px;height:17.6px;background:#dfe6ee;border-radius:2px;"></div>
<div class="b" style="left:716.8px;top:2373.2px;width:10.4px;height:4.8px;background:#5b8fd9;"></div>
<div class="b" style="left:742px;top:2373.6px;width:17.6px;height:15.2px;background:#e2b13c;border-radius:2.4px;"></div>
<div class="b" style="left:744px;top:2373.6px;width:10.4px;height:4px;background:#f5dc92;"></div>
<div class="b" style="left:782px;top:2372px;width:0;height:0;border-top:9.2px solid transparent;border-bottom:9.2px solid transparent;border-left:16px solid #e6e6e6;"></div>
<div class="b" style="left:813.2px;top:2373.2px;width:3.2px;height:3.2px;background:#d0d0d0;border-radius:1.6px;"></div>
<div class="b" style="left:813.2px;top:2379.6px;width:3.2px;height:3.2px;background:#d0d0d0;border-radius:1.6px;"></div>
<div class="b" style="left:813.2px;top:2386px;width:3.2px;height:3.2px;background:#d0d0d0;border-radius:1.6px;"></div>
<div class="b" style="left:842.4px;top:2373.2px;width:11.2px;height:2.4px;background:#8e8e8e;"></div>
<div class="b" style="left:872px;top:2372.4px;width:12px;height:13.6px;background:transparent;border:1.6px solid #767676;border-top-width:2.8px;"></div>
<div class="b" style="left:281.6px;top:2359.6px;width:3.2px;height:1306.8px;background:#505054;"></div>
<div class="b" style="left:905.6px;top:2364.4px;width:2.8px;height:1302px;background:#55555a;"></div>
<div class="b" style="left:908.4px;top:2360.4px;width:1405.6px;height:37.6px;background:#444448;"></div>
<div class="b" style="left:908.4px;top:2394.8px;width:1405.6px;height:7.6px;background:#2c2c30;"></div>
<div class="b" style="left:2322.4px;top:2360.4px;width:460.8px;height:485.6px;background:#2f2f2f;"></div>
<div class="b" style="left:2322.4px;top:2360.4px;width:460.8px;height:37.6px;background:#444448;"></div>
<div class="b" style="left:2455.2px;top:2364.4px;width:1.6px;height:33.6px;background:#4c4c50;"></div>
<div class="b" style="left:2322.4px;top:2401.2px;width:460.8px;height:30px;background:#3b3b3f;"></div>
<div class="b" style="left:2323.6px;top:2398.8px;width:132px;height:2.4px;background:#8a8a8a;"></div>
<div class="b" style="left:2331.6px;top:2375.6px;width:11.2px;height:16px;background:#d8d8d8;border-radius:1.6px;"></div>
<div class="t s" style="top:2371.12px;font-size:18.8px;line-height:22.56px;color:#e0e0e0;left:2351.2px;">Task List</div>
<div class="b" style="left:2430.56px;top:2380.8px;width:15.68px;height:1.8px;background:#a0a0a0;transform:rotate(45deg)"></div>
<div class="b" style="left:2430.56px;top:2380.8px;width:15.68px;height:1.8px;background:#a0a0a0;transform:rotate(-45deg)"></div>
<div class="b" style="left:2732px;top:2372.4px;width:11.2px;height:2.8px;background:#8e8e8e;"></div>
<div class="b" style="left:2761.6px;top:2371.6px;width:12px;height:14.4px;background:transparent;border:1.6px solid #767676;border-top-width:2.8px;"></div>
<div class="b" style="left:2258.4px;top:2372.4px;width:11.2px;height:2.8px;background:#8e8e8e;"></div>
<div class="b" style="left:2286.4px;top:2371.6px;width:12px;height:14.4px;background:transparent;border:1.6px solid #767676;border-top-width:2.8px;"></div>
<div class="b" style="left:2458px;top:2408.4px;width:16.8px;height:16px;background:#e4e4e4;border-radius:3.2px;"></div>
<div class="b" style="left:2469.6px;top:2405.2px;width:8px;height:8px;background:#e9c440;"></div>
<div class="b" style="left:2489.2px;top:2413.2px;width:9.6px;height:8.4px;background:#111;border-radius:4.4px"></div>
<div class="b" style="left:2514.4px;top:2402.8px;width:28px;height:27.2px;background:#bcd9f2;border-radius:2px;"></div>
<div class="b" style="left:2521.2px;top:2409.6px;width:13.6px;height:13.6px;background:#4d7fd0;border-radius:3.2px;"></div>
<div class="b" style="left:2552.4px;top:2408.4px;width:12px;height:16px;background:#5b8fd9;border-radius:2px;"></div>
<div class="b" style="left:2574.4px;top:2406.4px;width:3.2px;height:20px;background:#4a4a4e;"></div>
<div class="b" style="left:2592px;top:2408px;width:0;height:0;border-top:8.4px solid transparent;border-bottom:8.4px solid transparent;border-left:15.2px solid #e0e0e0;"></div>
<div class="b" style="left:2631.2px;top:2414px;width:14.4px;height:4.8px;background:#44679a;border-radius:1.6px;"></div>
<div class="b" style="left:2658px;top:2407.2px;width:12px;height:18.4px;background:#e0b040;border-radius:1.6px;"></div>
<div class="b" style="left:2662.8px;top:2407.2px;width:2.8px;height:18.4px;background:#3a67b5;"></div>
<div class="b" style="left:2692px;top:2408px;width:16px;height:16.8px;background:#e6e6e6;border-radius:2.4px;"></div>
<div class="b" style="left:2728px;top:2408.8px;width:17.6px;height:15.2px;background:#e9b540;border-radius:2.4px;"></div>
<div class="b" style="left:2732px;top:2408.4px;width:9.6px;height:6.4px;background:#6f9ad8;"></div>
<div class="b" style="left:2770.4px;top:2408.4px;width:3.2px;height:3.2px;background:#d0d0d0;border-radius:1.6px;"></div>
<div class="b" style="left:2770.4px;top:2414.8px;width:3.2px;height:3.2px;background:#d0d0d0;border-radius:1.6px;"></div>
<div class="b" style="left:2770.4px;top:2421.2px;width:3.2px;height:3.2px;background:#d0d0d0;border-radius:1.6px;"></div>
<div class="b" style="left:2333.2px;top:2437.6px;width:164.4px;height:33.2px;background:#2a2a2a;border:2px solid #55585c;box-sizing:border-box;"></div>
<div class="t s" style="top:2445.44px;font-size:17.6px;line-height:21.12px;color:#5a5d62;left:2340.8px;">Find</div>
<div class="b" style="left:2510px;top:2456px;width:9.6px;height:8.4px;background:#888;border-radius:4.4px"></div>
<div class="t s" style="top:2446.88px;font-size:19.2px;line-height:23.04px;color:#a0a0a0;left:2528px;">All</div>
<div class="b" style="left:2567.6px;top:2456px;width:9.6px;height:8.4px;background:#888;border-radius:4.4px"></div>
<div class="t s" style="top:2446.88px;font-size:19.2px;line-height:23.04px;color:#a0a0a0;left:2586px;">Activate...</div>
<div class="b" style="left:2770px;top:2444.8px;width:18.4px;height:18.4px;background:#dbe7f7;border-radius:9.2px;"></div>
<div class="b" style="left:2776.8px;top:2448.4px;width:3.6px;height:10.4px;background:#3f6fc0;"></div>
<div class="b" style="left:2322.4px;top:2846px;width:460.8px;height:488px;background:#2f2f2f;"></div>
<div class="b" style="left:2322.4px;top:2846px;width:460.8px;height:46.4px;background:#444448;"></div>
<div class="b" style="left:2448.8px;top:2850px;width:1.6px;height:42.4px;background:#4c4c50;"></div>
<div class="b" style="left:2323.6px;top:2892.4px;width:125.6px;height:2.4px;background:#8a8a8a;"></div>
<div class="b" style="left:2330.4px;top:2860.4px;width:4.8px;height:4.8px;background:#4d8fe0;"></div>
<div class="b" style="left:2330.4px;top:2868.4px;width:4.8px;height:4.8px;background:#4d8fe0;"></div>
<div class="b" style="left:2330.4px;top:2876.4px;width:4.8px;height:4.8px;background:#4d8fe0;"></div>
<div class="b" style="left:2336.8px;top:2862px;width:6.4px;height:2px;background:#bbb;"></div>
<div class="b" style="left:2336.8px;top:2870px;width:6.4px;height:2px;background:#bbb;"></div>
<div class="b" style="left:2336.8px;top:2878px;width:6.4px;height:2px;background:#bbb;"></div>
<div class="t s" style="top:2862.88px;font-size:19.2px;line-height:23.04px;color:#e0e0e0;left:2351.2px;">Outline</div>
<div class="b" style="left:2420.56px;top:2872.8px;width:15.68px;height:1.8px;background:#a0a0a0;transform:rotate(45deg)"></div>
<div class="b" style="left:2420.56px;top:2872.8px;width:15.68px;height:1.8px;background:#a0a0a0;transform:rotate(-45deg)"></div>
<div class="b" style="left:2732px;top:2860.4px;width:11.2px;height:2.8px;background:#8e8e8e;"></div>
<div class="b" style="left:2761.6px;top:2859.6px;width:12px;height:14.4px;background:transparent;border:1.6px solid #767676;border-top-width:2.8px;"></div>
<div class="b" style="left:2706.4px;top:2859.6px;width:3.2px;height:3.2px;background:#d0d0d0;border-radius:1.6px;"></div>
<div class="b" style="left:2706.4px;top:2866px;width:3.2px;height:3.2px;background:#d0d0d0;border-radius:1.6px;"></div>
<div class="b" style="left:2706.4px;top:2872.4px;width:3.2px;height:3.2px;background:#d0d0d0;border-radius:1.6px;"></div>
<div class="b" style="left:908px;top:3343.6px;width:1875.2px;height:322.8px;background:#2f2f2f;"></div>
<div class="b" style="left:908px;top:3343.6px;width:1875.2px;height:38.4px;background:#444448;"></div>
<div class="b" style="left:281.6px;top:3666.4px;width:2501.6px;height:35.2px;background:#46464a;"></div>
<div class="b" style="left:2766.4px;top:3678px;width:11.2px;height:14.4px;background:#f2c440;border-radius:5.6px;"></div>
<div class="b" style="left:2755.2px;top:3678.8px;width:2.4px;height:3.2px;background:#9a9a9a;"></div>
<div class="b" style="left:2755.2px;top:3686px;width:2.4px;height:3.2px;background:#9a9a9a;"></div>
<div class="b" style="left:287.2px;top:2415.2px;width:0;height:0;border-left:5.2px solid transparent;border-right:5.2px solid transparent;border-top:6.4px solid #9a9a9a;"></div>
<div class="b" style="left:308.8px;top:2409.6px;width:18.4px;height:17.6px;background:#d8a0a6;border-radius:3.2px;"></div>
<div class="b" style="left:317.6px;top:2406px;width:12px;height:11.2px;background:#6a98dc;border-radius:2.8px;"></div>
<div class="b" style="left:310.4px;top:2408px;width:7.2px;height:5.6px;background:#e8c07a;border-radius:2px;"></div>
<div class="t s" style="left:336.4px;top:2406px;font-size:19.2px;line-height:23.2px;color:#8c8c8c">cloudsim</div>
<div class="b" style="left:317.2px;top:2444.96px;width:0;height:0;border-top:4.4px solid transparent;border-bottom:4.4px solid transparent;border-left:5.6px solid #5c5c5c;"></div>
<div class="b" style="left:336px;top:2446.16px;width:4.4px;height:11.2px;background:#cf9a38;"></div>
<div class="b" style="left:340.8px;top:2441.36px;width:4.4px;height:16px;background:#4f9ac4;"></div>
<div class="b" style="left:345.6px;top:2439.76px;width:4.4px;height:17.6px;background:#cf9a38;"></div>
<div class="b" style="left:350.4px;top:2443.76px;width:4px;height:13.6px;background:#74a64c;"></div>
<div class="t s" style="left:362.4px;top:2436.96px;font-size:19.2px;line-height:23.2px;color:#b0b0b0">JRE System Library <span style="color:#a08a50">[jre]</span></div>
<div class="b" style="left:314px;top:2477.12px;width:0;height:0;border-left:5.2px solid transparent;border-right:5.2px solid transparent;border-top:6.4px solid #9a9a9a;"></div>
<div class="b" style="left:336px;top:2473.52px;width:19.6px;height:14.4px;background:#e6c070;border-radius:2.4px;"></div>
<div class="b" style="left:336px;top:2470.72px;width:8.8px;height:4.8px;background:#e6c070;border-radius:2px;"></div>
<div class="b" style="left:346.4px;top:2477.12px;width:7.2px;height:7.2px;background:#b98a4a;border-radius:1.6px;"></div>
<div class="t s" style="left:362.4px;top:2467.92px;font-size:19.2px;line-height:23.2px;color:#b0b0b0">examples</div>
<div class="b" style="left:339.6px;top:2508.08px;width:0;height:0;border-left:5.2px solid transparent;border-right:5.2px solid transparent;border-top:6.4px solid #9a9a9a;"></div>
<div class="b" style="left:364px;top:2502.48px;width:16.8px;height:16px;background:#d39a5c;border-radius:2px;"></div>
<div class="b" style="left:364px;top:2509.28px;width:16.8px;height:2.4px;background:#f0d8b8;"></div>
<div class="t s" style="left:388px;top:2498.88px;font-size:19.2px;line-height:23.2px;color:#b0b0b0">org.cloudbus.cloudsim.examples</div>
<div class="b" style="left:370px;top:2537.84px;width:0;height:0;border-top:4.4px solid transparent;border-bottom:4.4px solid transparent;border-left:5.6px solid #5c5c5c;"></div>
<div class="b" style="left:391.2px;top:2531.84px;width:14.4px;height:19.6px;background:#ccd4de;border-radius:2.4px;"></div>
<div class="b" style="left:394.8px;top:2537.84px;width:7.2px;height:8px;background:#5a8cd6;border-radius:2px;"></div>
<div class="t s" style="left:414px;top:2529.84px;font-size:19.2px;line-height:23.2px;color:#b0b0b0">CloudSimExample1.java</div>
<div class="b" style="left:370px;top:2568.8px;width:0;height:0;border-top:4.4px solid transparent;border-bottom:4.4px solid transparent;border-left:5.6px solid #5c5c5c;"></div>
<div class="b" style="left:391.2px;top:2562.8px;width:14.4px;height:19.6px;background:#ccd4de;border-radius:2.4px;"></div>
<div class="b" style="left:394.8px;top:2568.8px;width:7.2px;height:8px;background:#5a8cd6;border-radius:2px;"></div>
<div class="t s" style="left:414px;top:2560.8px;font-size:19.2px;line-height:23.2px;color:#b0b0b0">CloudSimExample2.java</div>
<div class="b" style="left:370px;top:2599.76px;width:0;height:0;border-top:4.4px solid transparent;border-bottom:4.4px solid transparent;border-left:5.6px solid #5c5c5c;"></div>
<div class="b" style="left:391.2px;top:2593.76px;width:14.4px;height:19.6px;background:#ccd4de;border-radius:2.4px;"></div>
<div class="b" style="left:394.8px;top:2599.76px;width:7.2px;height:8px;background:#5a8cd6;border-radius:2px;"></div>
<div class="t s" style="left:414px;top:2591.76px;font-size:19.2px;line-height:23.2px;color:#b0b0b0">CloudSimExample3.java</div>
<div class="b" style="left:370px;top:2630.72px;width:0;height:0;border-top:4.4px solid transparent;border-bottom:4.4px solid transparent;border-left:5.6px solid #5c5c5c;"></div>
<div class="b" style="left:391.2px;top:2624.72px;width:14.4px;height:19.6px;background:#ccd4de;border-radius:2.4px;"></div>
<div class="b" style="left:394.8px;top:2630.72px;width:7.2px;height:8px;background:#5a8cd6;border-radius:2px;"></div>
<div class="t s" style="left:414px;top:2622.72px;font-size:19.2px;line-height:23.2px;color:#b0b0b0">CloudSimExample4.java</div>
<div class="b" style="left:370px;top:2661.68px;width:0;height:0;border-top:4.4px solid transparent;border-bottom:4.4px solid transparent;border-left:5.6px solid #5c5c5c;"></div>
<div class="b" style="left:391.2px;top:2655.68px;width:14.4px;height:19.6px;background:#ccd4de;border-radius:2.4px;"></div>
<div class="b" style="left:394.8px;top:2661.68px;width:7.2px;height:8px;background:#5a8cd6;border-radius:2px;"></div>
<div class="t s" style="left:414px;top:2653.68px;font-size:19.2px;line-height:23.2px;color:#b0b0b0">CloudSimExample5.java</div>
<div class="b" style="left:370px;top:2692.64px;width:0;height:0;border-top:4.4px solid transparent;border-bottom:4.4px solid transparent;border-left:5.6px solid #5c5c5c;"></div>
<div class="b" style="left:391.2px;top:2686.64px;width:14.4px;height:19.6px;background:#ccd4de;border-radius:2.4px;"></div>
<div class="b" style="left:394.8px;top:2692.64px;width:7.2px;height:8px;background:#5a8cd6;border-radius:2px;"></div>
<div class="t s" style="left:414px;top:2684.64px;font-size:19.2px;line-height:23.2px;color:#b0b0b0">CloudSimExample6.java</div>
<div class="b" style="left:370px;top:2723.6px;width:0;height:0;border-top:4.4px solid transparent;border-bottom:4.4px solid transparent;border-left:5.6px solid #5c5c5c;"></div>
<div class="b" style="left:391.2px;top:2717.6px;width:14.4px;height:19.6px;background:#ccd4de;border-radius:2.4px;"></div>
<div class="b" style="left:394.8px;top:2723.6px;width:7.2px;height:8px;background:#5a8cd6;border-radius:2px;"></div>
<div class="t s" style="left:414px;top:2715.6px;font-size:19.2px;line-height:23.2px;color:#b0b0b0">CloudSimExample7.java</div>
<div class="b" style="left:370px;top:2754.56px;width:0;height:0;border-top:4.4px solid transparent;border-bottom:4.4px solid transparent;border-left:5.6px solid #5c5c5c;"></div>
<div class="b" style="left:391.2px;top:2748.56px;width:14.4px;height:19.6px;background:#ccd4de;border-radius:2.4px;"></div>
<div class="b" style="left:394.8px;top:2754.56px;width:7.2px;height:8px;background:#5a8cd6;border-radius:2px;"></div>
<div class="t s" style="left:414px;top:2746.56px;font-size:19.2px;line-height:23.2px;color:#b0b0b0">CloudSimExample8.java</div>
<div class="b" style="left:342.8px;top:2785.52px;width:0;height:0;border-top:4.4px solid transparent;border-bottom:4.4px solid transparent;border-left:5.6px solid #5c5c5c;"></div>
<div class="b" style="left:364px;top:2781.12px;width:16.8px;height:16px;background:#d39a5c;border-radius:2px;"></div>
<div class="b" style="left:364px;top:2787.92px;width:16.8px;height:2.4px;background:#f0d8b8;"></div>
<div class="t s" style="left:388px;top:2777.52px;font-size:19.2px;line-height:23.2px;color:#b0b0b0">org.cloudbus.cloudsim.examples.network</div>
<div class="b" style="left:342.8px;top:2816.48px;width:0;height:0;border-top:4.4px solid transparent;border-bottom:4.4px solid transparent;border-left:5.6px solid #5c5c5c;"></div>
<div class="b" style="left:364px;top:2812.08px;width:16.8px;height:16px;background:#d39a5c;border-radius:2px;"></div>
<div class="b" style="left:364px;top:2818.88px;width:16.8px;height:2.4px;background:#f0d8b8;"></div>
<div class="t s" style="left:388px;top:2808.48px;font-size:19.2px;line-height:23.2px;color:#b0b0b0">org.cloudbus.cloudsim.examples.network.datacenter</div>
<div class="b" style="left:342.8px;top:2847.44px;width:0;height:0;border-top:4.4px solid transparent;border-bottom:4.4px solid transparent;border-left:5.6px solid #5c5c5c;"></div>
<div class="b" style="left:364px;top:2843.04px;width:16.8px;height:16px;background:#d39a5c;border-radius:2px;"></div>
<div class="b" style="left:364px;top:2849.84px;width:16.8px;height:2.4px;background:#f0d8b8;"></div>
<div class="t s" style="left:388px;top:2839.44px;font-size:19.2px;line-height:23.2px;color:#b0b0b0">org.cloudbus.cloudsim.examples.power</div>
<div class="b" style="left:342.8px;top:2878.4px;width:0;height:0;border-top:4.4px solid transparent;border-bottom:4.4px solid transparent;border-left:5.6px solid #5c5c5c;"></div>
<div class="b" style="left:364px;top:2874px;width:16.8px;height:16px;background:#d39a5c;border-radius:2px;"></div>
<div class="b" style="left:364px;top:2880.8px;width:16.8px;height:2.4px;background:#f0d8b8;"></div>
<div class="t s" style="left:388px;top:2870.4px;font-size:19.2px;line-height:23.2px;color:#b0b0b0">org.cloudbus.cloudsim.examples.power.planetlab</div>
<div class="b" style="left:342.8px;top:2909.36px;width:0;height:0;border-top:4.4px solid transparent;border-bottom:4.4px solid transparent;border-left:5.6px solid #5c5c5c;"></div>
<div class="b" style="left:364px;top:2904.96px;width:16.8px;height:16px;background:#d39a5c;border-radius:2px;"></div>
<div class="b" style="left:364px;top:2911.76px;width:16.8px;height:2.4px;background:#f0d8b8;"></div>
<div class="t s" style="left:388px;top:2901.36px;font-size:19.2px;line-height:23.2px;color:#b0b0b0">org.cloudbus.cloudsim.examples.power.random</div>
<div class="b" style="left:342.8px;top:2940.32px;width:0;height:0;border-top:4.4px solid transparent;border-bottom:4.4px solid transparent;border-left:5.6px solid #5c5c5c;"></div>
<div class="b" style="left:364px;top:2935.92px;width:16.8px;height:16px;background:#cfcfcf;border-radius:2px;"></div>
<div class="b" style="left:364px;top:2942.72px;width:16.8px;height:2.4px;background:#8a8a8a;"></div>
<div class="t s" style="left:388px;top:2932.32px;font-size:19.2px;line-height:23.2px;color:#b0b0b0">workload.planetlab</div>
<div class="b" style="left:342.8px;top:2971.28px;width:0;height:0;border-top:4.4px solid transparent;border-bottom:4.4px solid transparent;border-left:5.6px solid #5c5c5c;"></div>
<div class="b" style="left:364.4px;top:2965.28px;width:14.4px;height:19.6px;background:#c8cfd9;border-radius:2.4px;"></div>
<div class="b" style="left:367.2px;top:2970.48px;width:8.8px;height:1.8px;background:#8aa6cf;"></div>
<div class="b" style="left:367.2px;top:2974.88px;width:8.8px;height:1.8px;background:#8aa6cf;"></div>
<div class="b" style="left:367.2px;top:2979.28px;width:8.8px;height:1.8px;background:#8aa6cf;"></div>
<div class="t s" style="left:388px;top:2963.28px;font-size:19.2px;line-height:23.2px;color:#b0b0b0">module-info.java</div>
<div class="b" style="left:317.2px;top:3002.24px;width:0;height:0;border-top:4.4px solid transparent;border-bottom:4.4px solid transparent;border-left:5.6px solid #5c5c5c;"></div>
<div class="b" style="left:336px;top:2999.84px;width:19.6px;height:14.4px;background:#e6c070;border-radius:2.4px;"></div>
<div class="b" style="left:336px;top:2997.04px;width:8.8px;height:4.8px;background:#e6c070;border-radius:2px;"></div>
<div class="b" style="left:346.4px;top:3003.44px;width:7.2px;height:7.2px;background:#b98a4a;border-radius:1.6px;"></div>
<div class="t s" style="left:362.4px;top:2994.24px;font-size:19.2px;line-height:23.2px;color:#b0b0b0">sources</div>
<div class="b" style="left:317.2px;top:3033.2px;width:0;height:0;border-top:4.4px solid transparent;border-bottom:4.4px solid transparent;border-left:5.6px solid #5c5c5c;"></div>
<div class="b" style="left:336px;top:3034.4px;width:4.4px;height:11.2px;background:#cf9a38;"></div>
<div class="b" style="left:340.8px;top:3029.6px;width:4.4px;height:16px;background:#4f9ac4;"></div>
<div class="b" style="left:345.6px;top:3028px;width:4.4px;height:17.6px;background:#cf9a38;"></div>
<div class="b" style="left:350.4px;top:3032px;width:4px;height:13.6px;background:#74a64c;"></div>
<div class="t s" style="left:362.4px;top:3025.2px;font-size:19.2px;line-height:23.2px;color:#b0b0b0">Referenced Libraries</div>
<div class="b" style="left:317.2px;top:3064.16px;width:0;height:0;border-top:4.4px solid transparent;border-bottom:4.4px solid transparent;border-left:5.6px solid #5c5c5c;"></div>
<div class="b" style="left:336px;top:3061.76px;width:19.6px;height:14.4px;background:#e8c878;border-radius:2.4px;"></div>
<div class="b" style="left:336px;top:3058.96px;width:8.8px;height:4.8px;background:#e8c878;border-radius:2px;"></div>
<div class="t s" style="left:362.4px;top:3056.16px;font-size:19.2px;line-height:23.2px;color:#b0b0b0">docs</div>
<div class="b" style="left:317.2px;top:3095.12px;width:0;height:0;border-top:4.4px solid transparent;border-bottom:4.4px solid transparent;border-left:5.6px solid #5c5c5c;"></div>
<div class="b" style="left:336px;top:3092.72px;width:19.6px;height:14.4px;background:#e8c878;border-radius:2.4px;"></div>
<div class="b" style="left:336px;top:3089.92px;width:8.8px;height:4.8px;background:#e8c878;border-radius:2px;"></div>
<div class="t s" style="left:362.4px;top:3087.12px;font-size:19.2px;line-height:23.2px;color:#b0b0b0">jars</div>
<div class="b" style="left:336.8px;top:3120.08px;width:14.4px;height:19.6px;background:#cbcbcb;border-radius:2.4px;"></div>
<div class="b" style="left:340px;top:3127.28px;width:8px;height:6.4px;background:#b0a070;"></div>
<div class="t s" style="left:362.4px;top:3118.08px;font-size:19.2px;line-height:23.2px;color:#b0b0b0">build.xml</div>
<div class="b" style="left:336.8px;top:3151.04px;width:14.4px;height:19.6px;background:#c8cfd9;border-radius:2.4px;"></div>
<div class="b" style="left:339.6px;top:3156.24px;width:8.8px;height:1.8px;background:#8aa6cf;"></div>
<div class="b" style="left:339.6px;top:3160.64px;width:8.8px;height:1.8px;background:#8aa6cf;"></div>
<div class="b" style="left:339.6px;top:3165.04px;width:8.8px;height:1.8px;background:#8aa6cf;"></div>
<div class="t s" style="left:362.4px;top:3149.04px;font-size:19.2px;line-height:23.2px;color:#b0b0b0">changelog.txt</div>
<div class="b" style="left:336.8px;top:3182px;width:14.4px;height:19.6px;background:#c8cfd9;border-radius:2.4px;"></div>
<div class="b" style="left:339.6px;top:3187.2px;width:8.8px;height:1.8px;background:#8aa6cf;"></div>
<div class="b" style="left:339.6px;top:3191.6px;width:8.8px;height:1.8px;background:#8aa6cf;"></div>
<div class="b" style="left:339.6px;top:3196px;width:8.8px;height:1.8px;background:#8aa6cf;"></div>
<div class="t s" style="left:362.4px;top:3180px;font-size:19.2px;line-height:23.2px;color:#b0b0b0">examples.txt</div>
<div class="b" style="left:336.8px;top:3212.96px;width:14.4px;height:19.6px;background:#c8cfd9;border-radius:2.4px;"></div>
<div class="b" style="left:339.6px;top:3218.16px;width:8.8px;height:1.8px;background:#8aa6cf;"></div>
<div class="b" style="left:339.6px;top:3222.56px;width:8.8px;height:1.8px;background:#8aa6cf;"></div>
<div class="b" style="left:339.6px;top:3226.96px;width:8.8px;height:1.8px;background:#8aa6cf;"></div>
<div class="t s" style="left:362.4px;top:3210.96px;font-size:19.2px;line-height:23.2px;color:#b0b0b0">license.txt</div>
<div class="b" style="left:336.8px;top:3243.92px;width:14.4px;height:19.6px;background:#c6cdd8;border-radius:2.4px;"></div>
<div class="b" style="left:340px;top:3250.32px;width:8px;height:8px;background:#cf9a38;"></div>
<div class="t s" style="left:362.4px;top:3241.92px;font-size:19.2px;line-height:23.2px;color:#b0b0b0">pom.xml</div>
<div class="b" style="left:336.8px;top:3274.88px;width:14.4px;height:19.6px;background:#c8cfd9;border-radius:2.4px;"></div>
<div class="b" style="left:339.6px;top:3280.08px;width:8.8px;height:1.8px;background:#8aa6cf;"></div>
<div class="b" style="left:339.6px;top:3284.48px;width:8.8px;height:1.8px;background:#8aa6cf;"></div>
<div class="b" style="left:339.6px;top:3288.88px;width:8.8px;height:1.8px;background:#8aa6cf;"></div>
<div class="t s" style="left:362.4px;top:3272.88px;font-size:19.2px;line-height:23.2px;color:#b0b0b0">readme.txt</div>
<div class="b" style="left:336.8px;top:3305.84px;width:14.4px;height:19.6px;background:#c8cfd9;border-radius:2.4px;"></div>
<div class="b" style="left:339.6px;top:3311.04px;width:8.8px;height:1.8px;background:#8aa6cf;"></div>
<div class="b" style="left:339.6px;top:3315.44px;width:8.8px;height:1.8px;background:#8aa6cf;"></div>
<div class="b" style="left:339.6px;top:3319.84px;width:8.8px;height:1.8px;background:#8aa6cf;"></div>
<div class="t s" style="left:362.4px;top:3303.84px;font-size:19.2px;line-height:23.2px;color:#b0b0b0">release_notes.txt</div>
<div class="b" style="left:911.2px;top:2363.6px;width:270px;height:34.4px;background:#1e1f22;"></div>
<div class="b" style="left:911.2px;top:2362.8px;width:270px;height:3.2px;background:#3f7fd0;"></div>
<div class="b" style="left:917.6px;top:2372.4px;width:14.4px;height:19.6px;background:#ccd4de;border-radius:2.4px;"></div>
<div class="b" style="left:921.2px;top:2378.4px;width:7.2px;height:8px;background:#5a8cd6;border-radius:2px;"></div>
<div class="t s" style="top:2372.2px;font-size:19px;line-height:22.8px;color:#e4e4e4;left:942.4px;">CloudSimExample1.java</div>
<div class="b" style="left:1157.36px;top:2382px;width:15.68px;height:1.8px;background:#a0a0a0;transform:rotate(45deg)"></div>
<div class="b" style="left:1157.36px;top:2382px;width:15.68px;height:1.8px;background:#a0a0a0;transform:rotate(-45deg)"></div>
<div class="b" style="left:910.4px;top:2398px;width:1402.4px;height:937.2px;background:#1e1f22;"></div>
<div class="b" style="left:2270.4px;top:2398px;width:22.4px;height:914px;background:#17181a;"></div>
<div class="b" style="left:2278.8px;top:2429.2px;width:10px;height:125.2px;background:#8e8e8e;border-radius:4px;"></div>
<div class="b" style="left:926.4px;top:2404.4px;width:1344px;height:21.6px;background:#2b2d31;"></div>
<div class="b" style="left:912.8px;top:2405.6px;width:12px;height:21.6px;background:#2f6f8f;"></div>
<div class="b" style="left:977.6px;top:3312px;width:1292.8px;height:23.2px;background:#17181a;"></div>
<div class="b" style="left:984.8px;top:3319.6px;width:0;height:0;border-top:4px solid transparent;border-bottom:4px solid transparent;border-right:5.2px solid #777"></div>
<div class="b" style="left:2254.4px;top:3319.6px;width:0;height:0;border-top:4px solid transparent;border-bottom:4px solid transparent;border-left:5.2px solid #777"></div>
<div class="t m" style="right:2108.8px;top:2406.8px;color:#8a8d91">1</div>
<div class="t m" style="left:977.2px;top:2406.8px;"><span style="color:#cc7832;">package</span><span style="color:#d6d6d6;"> org.cloudbus.cloudsim.examples;</span></div>
<div class="t m" style="right:2108.8px;top:2433.72px;color:#8a8d91">2</div>
<div class="t m" style="right:2108.8px;top:2460.6px;color:#8a8d91">4</div>
<div class="b" style="left:963.6px;top:2469px;width:7.2px;height:7.2px;background:#c8c8c8;border-radius:3.6px;"></div>
<div class="t m" style="left:977.2px;top:2460.6px;"><span style="color:#7f8388;"> * Title:        CloudSim Toolkit</span><span style="color:#d6d6d6;">▯</span></div>
<div class="t m" style="right:2108.8px;top:2487.52px;color:#8a8d91">11</div>
<div class="t m" style="right:2108.8px;top:2514.4px;color:#8a8d91">12</div>
<div class="b" style="left:963.6px;top:2522.8px;width:7.2px;height:7.2px;background:#c8c8c8;border-radius:3.6px;"></div>
<div class="t m" style="left:977.2px;top:2514.4px;"><span style="color:#cc7832;">import</span><span style="color:#d6d6d6;"> java.text.DecimalFormat;▯</span></div>
<div class="t m" style="right:2108.8px;top:2541.32px;color:#8a8d91">36</div>
<div class="t m" style="right:2108.8px;top:2568.2px;color:#8a8d91">37</div>
<div class="b" style="left:963.6px;top:2576.6px;width:7.2px;height:7.2px;background:#c8c8c8;border-radius:3.6px;"></div>
<div class="t m" style="left:977.2px;top:2568.2px;"><span style="color:#7f8388;">/**</span></div>
<div class="t m" style="right:2108.8px;top:2595.12px;color:#8a8d91">38</div>
<div class="t m" style="left:977.2px;top:2595.12px;"><span style="color:#7f8388;"> * A simple example showing how to create a </span><span style="color:#7f8388;text-decoration:underline;text-decoration-color:#7e5a6c;text-decoration-thickness:1.8px;text-underline-offset:1.2px">datacenter</span><span style="color:#7f8388;"> with one host and run one</span></div>
<div class="t m" style="right:2108.8px;top:2622px;color:#8a8d91">39</div>
<div class="t m" style="left:977.2px;top:2622px;"><span style="color:#7f8388;"> * </span><span style="color:#7f8388;text-decoration:underline;text-decoration-color:#7e5a6c;text-decoration-thickness:1.8px;text-underline-offset:1.2px">cloudlet</span><span style="color:#7f8388;"> on it.</span></div>
<div class="t m" style="right:2108.8px;top:2648.92px;color:#8a8d91">40</div>
<div class="t m" style="left:977.2px;top:2648.92px;"><span style="color:#7f8388;"> */</span></div>
<div class="t m" style="right:2108.8px;top:2675.8px;color:#8a8d91">41</div>
<div class="t m" style="left:977.2px;top:2675.8px;"><span style="color:#cc7832;">public class </span><span style="color:#1e8fc4;">CloudSimExample1</span><span style="color:#d6d6d6;"> {</span></div>
<div class="t m" style="right:2108.8px;top:2702.72px;color:#8a8d91">42</div>
<div class="t m" style="right:2108.8px;top:2729.6px;color:#8a8d91">43</div>
<div class="t m" style="left:977.2px;top:2729.6px;"><span style="color:#7f8388;">    /** The </span><span style="color:#7f8388;text-decoration:underline;text-decoration-color:#7e5a6c;text-decoration-thickness:1.8px;text-underline-offset:1.2px">cloudlet</span><span style="color:#7f8388;"> list. */</span></div>
<div class="t m" style="right:2108.8px;top:2756.48px;color:#8a8d91">44</div>
<div class="t m" style="left:977.2px;top:2756.48px;"><span style="color:#cc7832;">    private static </span><span style="color:#9be4ea;">List</span><span style="color:#d6d6d6;">&lt;</span><span style="color:#b48ad8;">Cloudlet</span><span style="color:#d6d6d6;">&gt; </span><span style="color:#8fc6e8;font-style:italic">cloudletList</span><span style="color:#d6d6d6;">;</span></div>
<div class="t m" style="right:2108.8px;top:2783.4px;color:#8a8d91">45</div>
<div class="t m" style="right:2108.8px;top:2810.32px;color:#8a8d91">46</div>
<div class="t m" style="left:977.2px;top:2810.32px;"><span style="color:#7f8388;">    /** The </span><span style="color:#7f8388;text-decoration:underline;text-decoration-color:#7e5a6c;text-decoration-thickness:1.8px;text-underline-offset:1.2px">vmlist</span><span style="color:#7f8388;">. */</span></div>
<div class="t m" style="right:2108.8px;top:2837.2px;color:#8a8d91">47</div>
<div class="t m" style="left:977.2px;top:2837.2px;"><span style="color:#cc7832;">    private static </span><span style="color:#9be4ea;">List</span><span style="color:#d6d6d6;">&lt;</span><span style="color:#b48ad8;">Vm</span><span style="color:#d6d6d6;">&gt; </span><span style="color:#8fc6e8;font-style:italic">vmlist</span><span style="color:#d6d6d6;">;</span></div>
<div class="t m" style="right:2108.8px;top:2864.12px;color:#8a8d91">48</div>
<div class="t m" style="right:2108.8px;top:2891px;color:#8a8d91">49</div>
<div class="b" style="left:963.6px;top:2899.4px;width:7.2px;height:7.2px;background:#c8c8c8;border-radius:3.6px;"></div>
<div class="t m" style="left:977.2px;top:2891px;"><span style="color:#7f8388;">    /**</span></div>
<div class="t m" style="right:2108.8px;top:2917.92px;color:#8a8d91">50</div>
<div class="t m" style="left:977.2px;top:2917.92px;"><span style="color:#7f8388;">     * Creates main() to run this example.</span></div>
<div class="t m" style="right:2108.8px;top:2944.8px;color:#8a8d91">51</div>
<div class="t m" style="left:977.2px;top:2944.8px;"><span style="color:#7f8388;">     *</span></div>
<div class="t m" style="right:2108.8px;top:2971.72px;color:#8a8d91">52</div>
<div class="t m" style="left:977.2px;top:2971.72px;"><span style="color:#7f8388;">     * </span><span style="color:#a8acb0;font-weight:bold">@param</span><span style="color:#7f8388;"> args the </span><span style="color:#7f8388;text-decoration:underline;text-decoration-color:#7e5a6c;text-decoration-thickness:1.8px;text-underline-offset:1.2px">args</span></div>
<div class="t m" style="right:2108.8px;top:2998.6px;color:#8a8d91">53</div>
<div class="t m" style="left:977.2px;top:2998.6px;"><span style="color:#7f8388;">     */</span></div>
<div class="t m" style="right:2108.8px;top:3025.52px;color:#8a8d91">54</div>
<div class="b" style="left:963.6px;top:3033.92px;width:7.2px;height:7.2px;background:#c8c8c8;border-radius:3.6px;"></div>
<div class="t m" style="left:977.2px;top:3025.52px;"><span style="color:#9c9c9c;">    @SuppressWarnings(</span><span style="color:#25c0a2;">"unused"</span><span style="color:#9c9c9c;">)</span></div>
<div class="t m" style="right:2108.8px;top:3052.4px;color:#8a8d91">55</div>
<div class="t m" style="left:977.2px;top:3052.4px;"><span style="color:#cc7832;">    public static void </span><span style="color:#3cb86a;">main</span><span style="color:#d6d6d6;">(</span><span style="color:#1e8fc4;">String</span><span style="color:#d6d6d6;">[] </span><span style="color:#79abff;">args</span><span style="color:#d6d6d6;">) {</span></div>
<div class="t m" style="right:2108.8px;top:3079.32px;color:#8a8d91">56</div>
<div class="t m" style="right:2108.8px;top:3106.2px;color:#8a8d91">57</div>
<div class="t m" style="left:977.2px;top:3106.2px;"><span style="color:#1e8fc4;">        Log</span><span style="color:#d6d6d6;">.</span><span style="color:#96e04a;font-style:italic">printLine</span><span style="color:#d6d6d6;">(</span><span style="color:#25c0a2;">"Starting CloudSimExample1..."</span><span style="color:#d6d6d6;">);</span></div>
<div class="t m" style="right:2108.8px;top:3133.12px;color:#8a8d91">58</div>
<div class="t m" style="right:2108.8px;top:3160px;color:#8a8d91">59</div>
<div class="t m" style="left:977.2px;top:3160px;"><span style="color:#cc7832;">        try</span><span style="color:#d6d6d6;"> {</span></div>
<div class="t m" style="right:2108.8px;top:3186.92px;color:#8a8d91">60</div>
<div class="t m" style="left:977.2px;top:3186.92px;"><span style="color:#7f8388;">            // First step: Initialize the CloudSim package. It should be called</span></div>
<div class="t m" style="right:2108.8px;top:3213.8px;color:#8a8d91">61</div>
<div class="t m" style="right:2108.8px;top:3240.72px;color:#8a8d91">62</div>
<div class="t m" style="right:2108.8px;top:3267.6px;color:#8a8d91">63</div>
<div class="t m" style="right:2108.8px;top:3294.48px;color:#8a8d91">64</div>
<div class="b" style="left:977.2px;top:2406.8px;width:2px;height:19.2px;background:#e0e0e0;"></div>
<div class="b" style="left:1117.2px;top:3134.8px;width:585.2px;height:239.2px;background:#30343a;box-shadow:0 0 6px rgba(0,0,0,0.6);"></div>
<div class="b" style="left:1117.2px;top:3344.8px;width:585.2px;height:4.8px;background:#8a8d91;"></div>
<div class="b" style="left:1117.2px;top:3349.6px;width:585.2px;height:24.4px;background:#4a4d52;"></div>
<div class="b" style="left:1131.2px;top:3145.6px;width:9.6px;height:9.6px;background:#d85a8a;border-radius:2px;"></div>
<div class="b" style="left:1138.4px;top:3144px;width:6.4px;height:6.4px;background:#5ab05a;border-radius:3.2px;"></div>
<div class="t s" style="left:1158px;top:3145.2px;font-size:20.8px;line-height:24.8px;color:#9aa0a6"><b style="color:#f2f2f2">void</b> org.cloudbus.cloudsim.Log.<b style="color:#f2f2f2">printLine(</b></div>
<div class="t sb" style="left:1179.2px;top:3171.2px;font-size:19px;line-height:23.2px;color:#f2f2f2">String message</div>
<div class="t sb" style="left:1158.4px;top:3197.6px;font-size:19px;line-height:23.2px;color:#f2f2f2">)</div>
<div class="t s" style="top:3271.8px;font-size:19px;line-height:22.8px;color:#d8d8d8;left:1126px;">Prints the line.</div>
<div class="t sb" style="top:3320.16px;font-size:18.4px;line-height:22.08px;color:#f2f2f2;left:1126px;">Parameters:</div>
<div class="t s" style="top:3353.36px;font-size:14.4px;line-height:17.28px;color:#d0d0d0;right:1374px;">Press 'F2' for focus</div>
<div class="b" style="left:2365.6px;top:2902.4px;width:16.8px;height:17.6px;background:#cbbf8a;border-radius:2px;"></div>
<div class="b" style="left:2365.6px;top:2910px;width:16.8px;height:2.4px;background:#8a7f50;"></div>
<div class="t s" style="top:2899.16px;font-size:19.4px;line-height:23.28px;color:#b0b0b0;left:2389.6px;">org.cloudbus.cloudsim.examples</div>
<div class="b" style="left:2334.4px;top:2935.88px;width:6.4px;height:6.4px;border-right:2px solid #9a9a9a;border-bottom:2px solid #9a9a9a;transform:rotate(45deg);"></div>
<div class="b" style="left:2362px;top:2932.28px;width:15.2px;height:15.2px;background:#5ab05a;border-radius:7.6px;"></div>
<div class="b" style="left:2376.8px;top:2944.68px;width:8px;height:7.2px;background:#7ab8e0;border-radius:1.6px;"></div>
<div class="t s" style="top:2930.24px;font-size:19.4px;line-height:23.28px;color:#b0b0b0;left:2389.6px;">CloudSimExample1</div>
<div class="b" style="left:2393.6px;top:2971.76px;width:6.4px;height:6.4px;background:#e05050;"></div>
<div class="b" style="left:2403.2px;top:2962.16px;width:7.2px;height:9.6px;background:#e8b0b0;border-radius:1.6px;"></div>
<div class="t s" style="left:2416.4px;top:2958.96px;font-size:19.6px;line-height:23.2px;color:#a8a8a8">cloudletList<span style="color:#96854a"> : List&lt;Cloudlet&gt;</span></div>
<div class="b" style="left:2393.6px;top:3002.84px;width:6.4px;height:6.4px;background:#e05050;"></div>
<div class="b" style="left:2403.2px;top:2993.24px;width:7.2px;height:9.6px;background:#e8b0b0;border-radius:1.6px;"></div>
<div class="t s" style="left:2416.4px;top:2990.04px;font-size:19.6px;line-height:23.2px;color:#a8a8a8">vmlist<span style="color:#96854a"> : List&lt;Vm&gt;</span></div>
<div class="b" style="left:2392.4px;top:3031.92px;width:9.6px;height:9.6px;background:#3fae3f;border-radius:4.8px;"></div>
<div class="b" style="left:2403.2px;top:3024.32px;width:7.2px;height:9.6px;background:#e8b0b0;border-radius:1.6px;"></div>
<div class="t s" style="left:2416.4px;top:3021.12px;font-size:19.6px;line-height:23.2px;color:#a8a8a8">main(String[])<span style="color:#96854a"> : void</span></div>
<div class="b" style="left:2392px;top:3063.4px;width:9.6px;height:9.6px;background:#e05050;"></div>
<div class="b" style="left:2403.2px;top:3055.4px;width:7.2px;height:9.6px;background:#e8b0b0;border-radius:1.6px;"></div>
<div class="t s" style="left:2416.4px;top:3052.2px;font-size:19.6px;line-height:23.2px;color:#a8a8a8">createDatacenter(String)<span style="color:#96854a"> : Datacenter</span></div>
<div class="b" style="left:2392px;top:3094.48px;width:9.6px;height:9.6px;background:#e05050;"></div>
<div class="b" style="left:2403.2px;top:3086.48px;width:7.2px;height:9.6px;background:#e8b0b0;border-radius:1.6px;"></div>
<div class="t s" style="left:2416.4px;top:3083.28px;font-size:19.6px;line-height:23.2px;color:#a8a8a8">createBroker()<span style="color:#96854a"> : DatacenterBroker</span></div>
<div class="b" style="left:2392px;top:3125.56px;width:9.6px;height:9.6px;background:#e05050;"></div>
<div class="b" style="left:2403.2px;top:3117.56px;width:7.2px;height:9.6px;background:#e8b0b0;border-radius:1.6px;"></div>
<div class="t s" style="left:2416.4px;top:3114.36px;font-size:19.6px;line-height:23.2px;color:#a8a8a8">printCloudletList(List&lt;Cloudlet&gt;)<span style="color:#96854a"> : void</span></div>
<div class="b" style="left:2488.8px;top:2860.4px;width:14.4px;height:14.4px;background:#e0e0e0;border-radius:4px;"></div>
<div class="b" style="left:2520.8px;top:2860.4px;width:14.4px;height:14.4px;background:#cfe0f0;border-radius:4px;"></div>
<div class="b" style="left:2553.6px;top:2862.8px;width:9.6px;height:9.6px;background:#3f9a86;border-radius:4px;"></div>
<div class="b" style="left:2583.2px;top:2862.8px;width:9.6px;height:9.6px;background:#4d8fe0;border-radius:4px;"></div>
<div class="b" style="left:2613.2px;top:2862.8px;width:9.6px;height:9.6px;background:#4a5fa8;border-radius:4px;"></div>
<div class="b" style="left:2643.2px;top:2862.8px;width:9.6px;height:9.6px;background:#4aa84a;border-radius:4px;"></div>
<div class="b" style="left:2671.2px;top:2862.8px;width:9.6px;height:9.6px;background:#4a5fa8;border-radius:4px;"></div>
<div class="b" style="left:921.2px;top:3361.6px;width:10.4px;height:10.4px;background:#6a9be0;border-radius:5.2px;"></div>
<div class="t s" style="top:3354.72px;font-size:18.8px;line-height:22.56px;color:#b0b0b0;left:940px;">Javadoc</div>
<div class="b" style="left:1023.6px;top:3357.6px;width:13.6px;height:16.8px;background:#e9c860;border-radius:2px;"></div>
<div class="t s" style="top:3354.36px;font-size:19.4px;line-height:23.28px;color:#b0b0b0;left:1047.2px;">Declarat</div>
<div class="b" style="left:2732px;top:3355.6px;width:11.2px;height:2.8px;background:#8e8e8e;"></div>
<div class="b" style="left:2761.6px;top:3354.8px;width:12px;height:14.4px;background:transparent;border:1.6px solid #767676;border-top-width:2.8px;"></div>
<div class="b" style="left:1263.2px;top:3380px;width:260px;height:3.2px;background:#8c8c8c;"></div>
<div class="t s" style="top:3394.76px;font-size:21.4px;line-height:25.68px;color:#c4c4c4;left:921.2px;">Java 24 has been released.</div>
<div class="t s" style="top:3436.12px;font-size:21.8px;line-height:26.16px;color:#c4c4c4;left:921.2px;">Would you like to install Eclipse Java Development Tools support for Java 24 into your IDE?</div>
<div class="b" style="left:919.2px;top:3476px;width:248px;height:37.2px;background:#ee7208;border-radius:2.4px;"></div>
<div class="t s" style="top:3479.84px;font-size:21.6px;line-height:25.92px;color:#fff;left:443.2px;width:1200px;text-align:center;">Install Java 24 Support</div>
<div class="b" style="left:1179.6px;top:3476px;width:187.6px;height:37.2px;background:#ee7208;border-radius:2.4px;"></div>
<div class="t s" style="top:3479.84px;font-size:21.6px;line-height:25.92px;color:#fff;left:673.4px;width:1200px;text-align:center;">Remind Me Later</div>
<div class="b" style="left:1380.8px;top:3476px;width:170.8px;height:37.2px;background:#ee7208;border-radius:2.4px;"></div>
<div class="t s" style="top:3479.84px;font-size:21.6px;line-height:25.92px;color:#fff;left:866.2px;width:1200px;text-align:center;">Don't Ask Again</div>
<div class="t s" style="top:3520.76px;font-size:21.4px;line-height:25.68px;color:#c4c4c4;left:921.2px;">Would you like to download a Java 24 JDK?</div>
<div class="b" style="left:919.2px;top:3561.2px;width:248px;height:37.2px;background:#ee7208;border-radius:2.4px;"></div>
<div class="t s" style="top:3565.04px;font-size:21.6px;line-height:25.92px;color:#fff;left:443.2px;width:1200px;text-align:center;">Download OpenJDK 24</div>
<div class="b" style="left:1628px;top:3672px;width:2.8px;height:24px;background:#b0b0b0;"></div>
<div class="b" style="left:1856.8px;top:3672px;width:2.8px;height:24px;background:#b0b0b0;"></div>
<div class="b" style="left:2072.4px;top:3672px;width:2.8px;height:24px;background:#b0b0b0;"></div>
<div class="b" style="left:2285.6px;top:3674.4px;width:2px;height:4px;background:#9a9a9a;"></div>
<div class="b" style="left:2285.6px;top:3682.4px;width:2px;height:4px;background:#9a9a9a;"></div>
<div class="b" style="left:2285.6px;top:3690.4px;width:2px;height:4px;background:#9a9a9a;"></div>
<div class="t s" style="top:3674.08px;font-size:19.2px;line-height:23.04px;color:#c0c0c0;left:1638px;">Writable</div>
<div class="t s" style="top:3674.08px;font-size:19.2px;line-height:23.04px;color:#c0c0c0;left:1864px;">Smart Insert</div>
<div class="t s" style="top:3674.08px;font-size:19.2px;line-height:23.04px;color:#c0c0c0;left:2080.8px;">1 : 1 : 0</div>
</div></div></body></html>
